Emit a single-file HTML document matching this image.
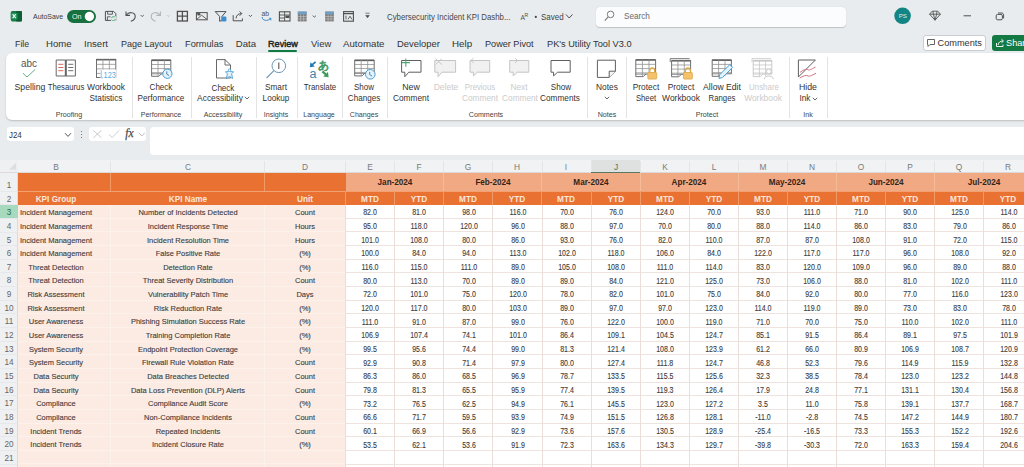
<!DOCTYPE html><html><head><meta charset="utf-8"><style>
html,body{margin:0;padding:0;}body{width:1024px;height:467px;overflow:hidden;background:#E9ECEE;font-family:"Liberation Sans", sans-serif;position:relative;}
.a{position:absolute;}.t{position:absolute;white-space:nowrap;}
</style></head><body>
<div class="a" style="left:596.00px;top:6.50px;width:249.50px;height:20.00px;background:#FBFCFD;border-radius:4px;box-shadow:0 0.6px 1px rgba(0,0,0,0.18);"></div>
<svg class="a" style="left:0;top:0" width="1024" height="30" viewBox="0 0 1024 30"><rect x="10.8" y="10.9" width="11.2" height="10.5" rx="1.6" fill="#1A7A45"/><rect x="16" y="10.9" width="6" height="10.5" rx="1" fill="#0E5F33"/><rect x="10.8" y="13" width="6.8" height="6.4" rx="0.6" fill="#21915A"/><path d="M12.6 14.2 L15.8 18.2 M15.8 14.2 L12.6 18.2" stroke="#E8F6EE" stroke-width="1.2"/><rect x="67" y="10" width="29" height="13" rx="6.5" fill="#17703F"/><circle cx="89.4" cy="16.5" r="4.7" fill="#fff"/><path d="M105.4 11.4 H113.6 L115.8 13.6 V20.4 H105.4 Z" fill="none" stroke="#505050" stroke-width="1"/><path d="M107.6 11.4 V14.2 H112.4 V11.4 M107.4 20.4 V16.8 H110.6" fill="none" stroke="#505050" stroke-width="0.9"/><circle cx="113.4" cy="18.6" r="3" fill="#E9ECEE"/><path d="M111.4 18.2 A2.1 2.1 0 0 1 115.2 17.6 M115.4 19 A2.1 2.1 0 0 1 111.6 19.6" fill="none" stroke="#3FA86A" stroke-width="0.9"/><path d="M126 11.4 V15.4 H130" fill="none" stroke="#505050" stroke-width="1.1"/><path d="M126.4 15 C128.6 11.6 135.2 11.8 135.2 16.2 C135.2 18.8 133 20.6 130.8 21.2" fill="none" stroke="#505050" stroke-width="1.1"/><path d="M140.6 15 L142.2 16.6 L143.8 15" fill="none" stroke="#505050" stroke-width="0.9"/><path d="M160.4 11.4 V15.4 H156.4" fill="none" stroke="#b4b4b4" stroke-width="1.1"/><path d="M160 15 C157.8 11.6 151.2 11.8 151.2 16.2 C151.2 18.8 153.4 20.6 155.6 21.2" fill="none" stroke="#b4b4b4" stroke-width="1.1"/><path d="M166.6 15 L168.2 16.6 L169.8 15" fill="none" stroke="#c4c4c4" stroke-width="0.9"/><rect x="177.4" y="11.4" width="10" height="9.6" fill="none" stroke="#505050" stroke-width="1.3"/><path d="M182.4 11.4 V21 M177.4 16.2 H187.4" stroke="#505050" stroke-width="1.3"/><rect x="196.4" y="12.6" width="10.8" height="7.2" fill="none" stroke="#505050" stroke-width="1"/><path d="M196.8 19.4 L201.6 15.2 L207 19.4 M196.6 13.6 L200 13.6" fill="none" stroke="#505050" stroke-width="0.9"/><rect x="197.4" y="13.4" width="3" height="2" fill="#505050"/><path d="M215.2 11.6 H226 L222 16.4 V20.6 L219.6 21.2 V16.4 Z" fill="none" stroke="#505050" stroke-width="1" stroke-linejoin="round"/><rect x="221.6" y="16.6" width="4.8" height="4.8" rx="1.2" fill="#3D8FD1"/><path d="M233.2 15.2 V20.8 H242.4 V18.4" fill="none" stroke="#505050" stroke-width="1"/><path d="M236 18.4 C236.4 15 238.4 13.6 241.6 13.6 M239.6 11.4 L241.8 13.6 L239.6 15.8" fill="none" stroke="#505050" stroke-width="1"/><path d="M248.8 15 L250.4 16.6 L252 15" fill="none" stroke="#505050" stroke-width="0.9"/><text x="261.4" y="16.2" font-family="Liberation Sans" font-size="6.8" fill="#505050">ab</text><path d="M262.2 17 C262 20.6 267.4 21.6 270.8 18.6 M269 18.2 L271 18.4 L270.8 20.4" fill="none" stroke="#3D8FD1" stroke-width="1"/><rect x="279.4" y="11.8" width="10.6" height="9.2" fill="none" stroke="#505050" stroke-width="1.1"/><path d="M284.6 11.8 V21 M279.4 15 H290 M279.4 18 H284.6" stroke="#505050" stroke-width="0.9"/><rect x="285.4" y="15.6" width="4" height="2.4" fill="#505050"/><rect x="297.8" y="11.6" width="8.8" height="9.8" fill="#7a7a7a"/><rect x="297.8" y="11.6" width="8.8" height="2.8" fill="#6F9FC6"/><path d="M297.8 16.6 H306.6 M297.8 19 H306.6 M300.7 14.4 V21.4 M303.7 14.4 V21.4" stroke="#cfcfcf" stroke-width="0.6"/><path d="M312.8 15.6 L314.4 17.2 L316 15.6" fill="none" stroke="#505050" stroke-width="0.9"/><rect x="325.2" y="11.6" width="8.6" height="9.8" fill="#7a7a7a"/><rect x="325.2" y="11.6" width="8.6" height="2.8" fill="#6F9FC6"/><path d="M325.2 16.6 H333.8 M325.2 19 H333.8 M328.1 14.4 V21.4 M331 14.4 V21.4" stroke="#cfcfcf" stroke-width="0.6"/><rect x="343.6" y="11.6" width="9.8" height="9.6" fill="none" stroke="#505050" stroke-width="1.1"/><path d="M343.6 13.6 H353.4" stroke="#505050" stroke-width="1.3"/><path d="M346 15.6 V19.4 M348 19.4 L350 16.2 L352 19.4" fill="none" stroke="#505050" stroke-width="0.9"/><path d="M365.4 13.2 H369.6 M365.8 15.4 L367.5 17.8 L369.2 15.4 Z" fill="#505050" stroke="#505050" stroke-width="0.7"/><text x="520.4" y="20" font-family="Liberation Sans" font-size="6.6" fill="#505050">A</text><text x="524.4" y="16.6" font-family="Liberation Sans" font-size="5.2" fill="#505050">R</text><circle cx="535.8" cy="16.9" r="1.1" fill="#444"/><path d="M565.9 14.4 L569.2 18 L572.5 14.4" fill="none" stroke="#505050" stroke-width="1"/><circle cx="610.6" cy="14.4" r="3.3" fill="none" stroke="#7a7a7a" stroke-width="1"/><path d="M608.2 16.8 L604.8 20.6" stroke="#7a7a7a" stroke-width="1.1"/><circle cx="902.6" cy="15.8" r="8.3" fill="#138585"/><path d="M932.2 11.2 H937.8 L940.4 14.2 L935 20.2 L929.6 14.2 Z M929.6 14.2 H940.4 M933.4 14.2 L935 20.2 L936.6 14.2 M933 11.4 L933.4 14.2 M937 11.4 L936.6 14.2" fill="none" stroke="#505050" stroke-width="0.9" stroke-linejoin="round"/><path d="M963.6 15.8 H971" stroke="#505050" stroke-width="1"/><rect x="996.2" y="14.4" width="6.2" height="5.4" rx="1.4" fill="none" stroke="#505050" stroke-width="1"/><path d="M998 13 H1001.8 C1002.8 13 1003.6 13.8 1003.6 14.8 V18.4" fill="none" stroke="#505050" stroke-width="1"/></svg>
<div class="t" style="top:13.31px;font-size:7.2px;line-height:7.2px;color:#3a3a3a;left:33.40px;transform:scaleX(0.97);transform-origin:0 50%;">AutoSave</div>
<div class="t" style="top:13.07px;font-size:7.6px;line-height:7.6px;color:#E8F5EC;left:71.60px;transform:scaleX(0.95);transform-origin:0 50%;">On</div>
<div class="t" style="top:12.84px;font-size:8.7px;line-height:8.7px;color:#474747;left:386.50px;transform:scaleX(0.9);transform-origin:0 50%;">Cybersecurity Incident KPI Dashb...</div>
<div class="t" style="top:12.92px;font-size:8.6px;line-height:8.6px;color:#444;left:540.90px;transform:scaleX(0.93);transform-origin:0 50%;">Saved</div>
<div class="t" style="top:12.15px;font-size:8.8px;line-height:8.8px;color:#6a6a6a;left:624.00px;transform:scaleX(0.93);transform-origin:0 50%;">Search</div>
<div class="t" style="top:12.95px;font-size:6.2px;line-height:6.2px;color:#D8F0F0;left:752.80px;width:300px;text-align:center;">PS</div>
<div class="t" style="top:38.67px;font-size:9.6px;line-height:9.6px;color:#333;left:14.50px;transform:scaleX(0.92);transform-origin:0 50%;">File</div>
<div class="t" style="top:38.67px;font-size:9.6px;line-height:9.6px;color:#333;left:46.00px;transform:scaleX(1.0);transform-origin:0 50%;">Home</div>
<div class="t" style="top:38.67px;font-size:9.6px;line-height:9.6px;color:#333;left:84.00px;transform:scaleX(1.0);transform-origin:0 50%;">Insert</div>
<div class="t" style="top:38.67px;font-size:9.6px;line-height:9.6px;color:#333;left:121.00px;transform:scaleX(0.94);transform-origin:0 50%;">Page Layout</div>
<div class="t" style="top:38.67px;font-size:9.6px;line-height:9.6px;color:#333;left:185.00px;transform:scaleX(0.96);transform-origin:0 50%;">Formulas</div>
<div class="t" style="top:38.67px;font-size:9.6px;line-height:9.6px;color:#333;left:235.75px;transform:scaleX(1.0);transform-origin:0 50%;">Data</div>
<div class="t" style="top:38.67px;font-size:9.6px;line-height:9.6px;color:#222;left:268.00px;transform:scaleX(0.95);transform-origin:0 50%;-webkit-text-stroke:0.45px #222;">Review</div>
<div class="t" style="top:38.67px;font-size:9.6px;line-height:9.6px;color:#333;left:310.50px;transform:scaleX(0.98);transform-origin:0 50%;">View</div>
<div class="t" style="top:38.67px;font-size:9.6px;line-height:9.6px;color:#333;left:343.00px;transform:scaleX(1.01);transform-origin:0 50%;">Automate</div>
<div class="t" style="top:38.67px;font-size:9.6px;line-height:9.6px;color:#333;left:397.00px;transform:scaleX(0.98);transform-origin:0 50%;">Developer</div>
<div class="t" style="top:38.67px;font-size:9.6px;line-height:9.6px;color:#333;left:452.00px;transform:scaleX(1.02);transform-origin:0 50%;">Help</div>
<div class="t" style="top:38.67px;font-size:9.6px;line-height:9.6px;color:#333;left:485.00px;transform:scaleX(0.95);transform-origin:0 50%;">Power Pivot</div>
<div class="t" style="top:38.67px;font-size:9.6px;line-height:9.6px;color:#333;left:547.00px;transform:scaleX(0.96);transform-origin:0 50%;">PK's Utility Tool V3.0</div>
<div class="a" style="left:268.00px;top:49.80px;width:29.00px;height:1.80px;background:#107C41;border-radius:1px;"></div>
<div class="a" style="left:923.00px;top:35.00px;width:63.00px;height:16.30px;background:#FFFFFF;border:1px solid #C9CCD0;border-radius:3px;box-sizing:border-box;"></div>
<svg class="a" style="left:925.8px;top:38.4px;" width="10" height="10" viewBox="0 0 10 10"><path d="M1.5 1.5 H8.5 V6.5 H4 L2 8.5 V6.5 H1.5 Z" fill="none" stroke="#555" stroke-width="0.9"/></svg>
<div class="t" style="top:38.70px;font-size:9.2px;line-height:9.2px;color:#333;left:937.50px;">Comments</div>
<div class="a" style="left:992.00px;top:35.00px;width:38.00px;height:16.30px;background:#137A43;border-radius:3px;"></div>
<svg class="a" style="left:995px;top:38px;" width="10" height="10" viewBox="0 0 10 10"><path d="M1.5 5 V8.5 H8 V6.5" fill="none" stroke="#fff" stroke-width="0.9"/><path d="M3 7 C3.5 4 5.5 3 8 3 M6.5 1.2 L8.5 3 L6.5 4.8" fill="none" stroke="#fff" stroke-width="0.9"/></svg>
<div class="t" style="top:38.70px;font-size:9.2px;line-height:9.2px;color:#fff;left:1006.00px;">Share</div>
<div class="a" style="left:5.70px;top:53.00px;width:1034.30px;height:66.70px;background:#FFFFFF;border-radius:6px;box-shadow:0 1px 2px rgba(0,0,0,0.2);"></div>
<div class="a" style="left:131.50px;top:57.00px;width:0.80px;height:61.00px;background:#E3E3E3;"></div>
<div class="a" style="left:190.50px;top:57.00px;width:0.80px;height:61.00px;background:#E3E3E3;"></div>
<div class="a" style="left:256.20px;top:57.00px;width:0.80px;height:61.00px;background:#E3E3E3;"></div>
<div class="a" style="left:296.50px;top:57.00px;width:0.80px;height:61.00px;background:#E3E3E3;"></div>
<div class="a" style="left:342.00px;top:57.00px;width:0.80px;height:61.00px;background:#E3E3E3;"></div>
<div class="a" style="left:386.50px;top:57.00px;width:0.80px;height:61.00px;background:#E3E3E3;"></div>
<div class="a" style="left:586.50px;top:57.00px;width:0.80px;height:61.00px;background:#E3E3E3;"></div>
<div class="a" style="left:625.60px;top:57.00px;width:0.80px;height:61.00px;background:#E3E3E3;"></div>
<div class="a" style="left:788.80px;top:57.00px;width:0.80px;height:61.00px;background:#E3E3E3;"></div>
<div class="a" style="left:827.30px;top:57.00px;width:0.80px;height:61.00px;background:#E3E3E3;"></div>
<div class="t" style="top:82.98px;font-size:9.0px;line-height:9.0px;color:#333;left:-120.50px;width:300px;text-align:center;transform:scaleX(0.962);transform-origin:50% 50%;">Spelling</div>
<div class="t" style="top:82.98px;font-size:9.0px;line-height:9.0px;color:#333;left:-84.12px;width:300px;text-align:center;transform:scaleX(0.859);transform-origin:50% 50%;">Thesaurus</div>
<div class="t" style="top:82.98px;font-size:9.0px;line-height:9.0px;color:#333;left:-44.00px;width:300px;text-align:center;transform:scaleX(0.937);transform-origin:50% 50%;">Workbook</div>
<div class="t" style="top:94.08px;font-size:9.0px;line-height:9.0px;color:#333;left:-44.00px;width:300px;text-align:center;transform:scaleX(0.911);transform-origin:50% 50%;">Statistics</div>
<div class="t" style="top:82.98px;font-size:9.0px;line-height:9.0px;color:#333;left:11.00px;width:300px;text-align:center;transform:scaleX(0.894);transform-origin:50% 50%;">Check</div>
<div class="t" style="top:94.08px;font-size:9.0px;line-height:9.0px;color:#333;left:11.00px;width:300px;text-align:center;transform:scaleX(0.908);transform-origin:50% 50%;">Performance</div>
<div class="t" style="top:82.98px;font-size:9.0px;line-height:9.0px;color:#333;left:126.15px;width:300px;text-align:center;transform:scaleX(0.912);transform-origin:50% 50%;">Smart</div>
<div class="t" style="top:94.08px;font-size:9.0px;line-height:9.0px;color:#333;left:126.00px;width:300px;text-align:center;transform:scaleX(0.908);transform-origin:50% 50%;">Lookup</div>
<div class="t" style="top:82.98px;font-size:9.0px;line-height:9.0px;color:#333;left:169.60px;width:300px;text-align:center;transform:scaleX(0.871);transform-origin:50% 50%;">Translate</div>
<div class="t" style="top:82.98px;font-size:9.0px;line-height:9.0px;color:#333;left:214.40px;width:300px;text-align:center;transform:scaleX(0.888);transform-origin:50% 50%;">Show</div>
<div class="t" style="top:94.08px;font-size:9.0px;line-height:9.0px;color:#333;left:214.40px;width:300px;text-align:center;transform:scaleX(0.899);transform-origin:50% 50%;">Changes</div>
<div class="t" style="top:82.98px;font-size:9.0px;line-height:9.0px;color:#333;left:261.40px;width:300px;text-align:center;transform:scaleX(0.977);transform-origin:50% 50%;">New</div>
<div class="t" style="top:94.08px;font-size:9.0px;line-height:9.0px;color:#333;left:261.00px;width:300px;text-align:center;transform:scaleX(0.923);transform-origin:50% 50%;">Comment</div>
<div class="t" style="top:82.98px;font-size:9.0px;line-height:9.0px;color:#cbcbcb;left:295.70px;width:300px;text-align:center;transform:scaleX(0.946);transform-origin:50% 50%;">Delete</div>
<div class="t" style="top:82.98px;font-size:9.0px;line-height:9.0px;color:#cbcbcb;left:330.15px;width:300px;text-align:center;transform:scaleX(0.865);transform-origin:50% 50%;">Previous</div>
<div class="t" style="top:94.08px;font-size:9.0px;line-height:9.0px;color:#cbcbcb;left:329.90px;width:300px;text-align:center;transform:scaleX(0.923);transform-origin:50% 50%;">Comment</div>
<div class="t" style="top:82.98px;font-size:9.0px;line-height:9.0px;color:#cbcbcb;left:369.20px;width:300px;text-align:center;transform:scaleX(0.929);transform-origin:50% 50%;">Next</div>
<div class="t" style="top:94.08px;font-size:9.0px;line-height:9.0px;color:#cbcbcb;left:369.50px;width:300px;text-align:center;transform:scaleX(0.918);transform-origin:50% 50%;">Comment</div>
<div class="t" style="top:82.98px;font-size:9.0px;line-height:9.0px;color:#333;left:410.60px;width:300px;text-align:center;transform:scaleX(0.906);transform-origin:50% 50%;">Show</div>
<div class="t" style="top:94.08px;font-size:9.0px;line-height:9.0px;color:#333;left:410.10px;width:300px;text-align:center;transform:scaleX(0.915);transform-origin:50% 50%;">Comments</div>
<div class="t" style="top:82.98px;font-size:9.0px;line-height:9.0px;color:#333;left:456.50px;width:300px;text-align:center;transform:scaleX(0.927);transform-origin:50% 50%;">Notes</div>
<div class="t" style="top:82.98px;font-size:9.0px;line-height:9.0px;color:#333;left:495.85px;width:300px;text-align:center;transform:scaleX(0.929);transform-origin:50% 50%;">Protect</div>
<div class="t" style="top:94.08px;font-size:9.0px;line-height:9.0px;color:#333;left:495.70px;width:300px;text-align:center;transform:scaleX(0.858);transform-origin:50% 50%;">Sheet</div>
<div class="t" style="top:82.98px;font-size:9.0px;line-height:9.0px;color:#333;left:531.15px;width:300px;text-align:center;transform:scaleX(0.929);transform-origin:50% 50%;">Protect</div>
<div class="t" style="top:94.08px;font-size:9.0px;line-height:9.0px;color:#333;left:531.00px;width:300px;text-align:center;transform:scaleX(0.937);transform-origin:50% 50%;">Workbook</div>
<div class="t" style="top:82.98px;font-size:9.0px;line-height:9.0px;color:#333;left:571.80px;width:300px;text-align:center;transform:scaleX(0.957);transform-origin:50% 50%;">Allow Edit</div>
<div class="t" style="top:94.08px;font-size:9.0px;line-height:9.0px;color:#333;left:572.00px;width:300px;text-align:center;transform:scaleX(0.864);transform-origin:50% 50%;">Ranges</div>
<div class="t" style="top:82.98px;font-size:9.0px;line-height:9.0px;color:#cbcbcb;left:613.50px;width:300px;text-align:center;transform:scaleX(0.876);transform-origin:50% 50%;">Unshare</div>
<div class="t" style="top:94.08px;font-size:9.0px;line-height:9.0px;color:#cbcbcb;left:613.05px;width:300px;text-align:center;transform:scaleX(0.934);transform-origin:50% 50%;">Workbook</div>
<div class="t" style="top:83.98px;font-size:9.0px;line-height:9.0px;color:#333;left:73.00px;width:300px;text-align:center;transform:scaleX(0.894);transform-origin:50% 50%;">Check</div>
<div class="t" style="top:94.28px;font-size:9.0px;line-height:9.0px;color:#333;left:69.50px;width:300px;text-align:center;transform:scaleX(0.934);transform-origin:50% 50%;">Accessibility</div>
<div class="t" style="top:83.28px;font-size:9.0px;line-height:9.0px;color:#333;left:658.00px;width:300px;text-align:center;transform:scaleX(0.972);transform-origin:50% 50%;">Hide</div>
<div class="t" style="top:94.08px;font-size:9.0px;line-height:9.0px;color:#333;left:654.60px;width:300px;text-align:center;transform:scaleX(0.92);transform-origin:50% 50%;">Ink</div>
<svg class="a" style="left:243.8px;top:95.6px;" width="6" height="4" viewBox="0 0 6 4"><path d="M0.8 0.8 L3 3 L5.2 0.8" fill="none" stroke="#555" stroke-width="0.9"/></svg>
<svg class="a" style="left:603.5px;top:95.5px;" width="6" height="4" viewBox="0 0 6 4"><path d="M0.8 0.8 L3 3 L5.2 0.8" fill="none" stroke="#555" stroke-width="0.9"/></svg>
<svg class="a" style="left:811.5px;top:96.5px;" width="6" height="4" viewBox="0 0 6 4"><path d="M0.8 0.8 L3 3 L5.2 0.8" fill="none" stroke="#555" stroke-width="0.9"/></svg>
<div class="t" style="top:111.31px;font-size:7.9px;line-height:7.9px;color:#444;left:-80.75px;width:300px;text-align:center;transform:scaleX(0.9);transform-origin:50% 50%;">Proofing</div>
<div class="t" style="top:111.31px;font-size:7.9px;line-height:7.9px;color:#444;left:10.60px;width:300px;text-align:center;transform:scaleX(0.9);transform-origin:50% 50%;">Performance</div>
<div class="t" style="top:111.31px;font-size:7.9px;line-height:7.9px;color:#444;left:73.25px;width:300px;text-align:center;transform:scaleX(0.9);transform-origin:50% 50%;">Accessibility</div>
<div class="t" style="top:111.31px;font-size:7.9px;line-height:7.9px;color:#444;left:125.70px;width:300px;text-align:center;transform:scaleX(0.9);transform-origin:50% 50%;">Insights</div>
<div class="t" style="top:111.31px;font-size:7.9px;line-height:7.9px;color:#444;left:169.40px;width:300px;text-align:center;transform:scaleX(0.9);transform-origin:50% 50%;">Language</div>
<div class="t" style="top:111.31px;font-size:7.9px;line-height:7.9px;color:#444;left:214.25px;width:300px;text-align:center;transform:scaleX(0.9);transform-origin:50% 50%;">Changes</div>
<div class="t" style="top:111.31px;font-size:7.9px;line-height:7.9px;color:#444;left:336.00px;width:300px;text-align:center;transform:scaleX(0.9);transform-origin:50% 50%;">Comments</div>
<div class="t" style="top:111.31px;font-size:7.9px;line-height:7.9px;color:#444;left:456.50px;width:300px;text-align:center;transform:scaleX(0.9);transform-origin:50% 50%;">Notes</div>
<div class="t" style="top:111.31px;font-size:7.9px;line-height:7.9px;color:#444;left:557.00px;width:300px;text-align:center;transform:scaleX(0.9);transform-origin:50% 50%;">Protect</div>
<div class="t" style="top:111.31px;font-size:7.9px;line-height:7.9px;color:#444;left:657.50px;width:300px;text-align:center;transform:scaleX(0.9);transform-origin:50% 50%;">Ink</div>
<svg class="a" style="left:0;top:0" width="1024" height="125" viewBox="0 0 1024 125"><text x="21" y="67.4" font-family="Liberation Sans" font-size="10" fill="#555" textLength="16" lengthAdjust="spacingAndGlyphs">abc</text><path d="M23 73.2 L27 77 L35.2 69.4" fill="none" stroke="#62B285" stroke-width="1"/><path d="M56.2 60 H65.6 V76 H56.2 Z M66 76 V60 H75.4 V76 H66" fill="#fff" stroke="#5f5f5f" stroke-width="0.95"/><path d="M65.2 60.2 V76.3 M66.4 60.2 V76.3" stroke="#5f5f5f" stroke-width="0.6"/><path d="M58.3 64.3 H63.4 M58.3 67.5 H63.4 M58.3 70.7 H63.4" stroke="#D2574A" stroke-width="0.9"/><path d="M68.2 64.3 H73.3 M68.2 67.5 H73.3 M68.2 70.7 H73.3" stroke="#5f5f5f" stroke-width="0.9"/><rect x="96.5" y="59.3" width="19.299999999999997" height="18.200000000000003" fill="#fff" stroke="#5f5f5f" stroke-width="0.9"/><path d="M96.5 59.8 H115.8" stroke="#5f5f5f" stroke-width="1.3"/><path d="M102.93 59.3 V77.5" stroke="#8c8c8c" stroke-width="0.765"/><path d="M109.37 59.3 V77.5" stroke="#8c8c8c" stroke-width="0.765"/><path d="M96.5 64.35 H115.8" stroke="#8c8c8c" stroke-width="0.765"/><path d="M96.5 68.90 H115.8" stroke="#8c8c8c" stroke-width="0.765"/><path d="M96.5 73.45 H115.8" stroke="#8c8c8c" stroke-width="0.765"/><rect x="100.5" y="69.6" width="15.8" height="8.6" fill="#fff"/><path d="M101.2 70.2 V77.8 H103" fill="none" stroke="#7DBCE4" stroke-width="0.9"/><text x="103.6" y="77.6" font-family="Liberation Sans" font-size="8.6" fill="#5AAEE0" textLength="12.4" lengthAdjust="spacingAndGlyphs">123</text><path d="M151.6 59.9 H170.8 V73.8 M151.6 59.9 V76.3 H158.89600000000002 L161.39600000000002 73.8 H170.8" fill="#fff" stroke="#5f5f5f" stroke-width="0.9"/><path d="M151.6 73.8 H161.39600000000002" stroke="#5f5f5f" stroke-width="0.7200000000000001"/><path d="M151.6 60.4 H170.8" stroke="#5f5f5f" stroke-width="1.3"/><path d="M158.00 59.9 V76.3" stroke="#8c8c8c" stroke-width="0.765"/><path d="M164.40 59.9 V76.3" stroke="#8c8c8c" stroke-width="0.765"/><path d="M151.6 64.50 H170.8" stroke="#8c8c8c" stroke-width="0.765"/><path d="M151.6 68.60 H170.8" stroke="#8c8c8c" stroke-width="0.765"/><path d="M151.6 72.70 H170.8" stroke="#8c8c8c" stroke-width="0.765"/><circle cx="167.4" cy="73.8" r="4.6" fill="#E3F2FB" stroke="#4A9FD4" stroke-width="1"/><path d="M166.8 71.39999999999999 V74.2 L169.20000000000002 75.6" fill="none" stroke="#3F7FA8" stroke-width="0.9"/><path d="M216.5 59.6 H225 L230.5 65 V78 H216.5 Z" fill="#fff" stroke="#5f5f5f" stroke-width="0.95"/><path d="M225 59.6 V65 H230.5" fill="none" stroke="#5f5f5f" stroke-width="0.9"/><path d="M229.5 69 L230.7 71.6 L233.6 71.8 L231.6 73.8 L232.6 78.6 L229.5 76.4 L226.4 78.6 L227.4 73.8 L225.4 71.8 L228.3 71.6 Z" fill="#E3F2FB" stroke="#4A9FD4" stroke-width="0.9" stroke-linejoin="round"/><circle cx="229.5" cy="70.2" r="1.3" fill="#fff" stroke="#4A9FD4" stroke-width="0.8"/><circle cx="278.8" cy="65.8" r="6.8" fill="#fff" stroke="#6E97B3" stroke-width="1"/><path d="M273.9 70.7 L266.6 78" stroke="#6E97B3" stroke-width="1.1"/><path d="M278.8 62.6 V69" stroke="#555" stroke-width="1.1"/><text x="318.4" y="68.6" font-family="Liberation Sans" font-size="11" fill="#3F9A5E" stroke="#3F9A5E" stroke-width="0.6">あ</text><text x="309.6" y="77.8" font-family="Liberation Sans" font-size="12" fill="#3A87AE" textLength="7" lengthAdjust="spacingAndGlyphs">a</text><path d="M316.2 62.4 L313.2 65 L314.8 66.6 L309.8 67.2 L310.4 62.2 L312 63.8 L315 61.2 Z" fill="#1F7CB8"/><path d="M321.6 72.2 L324.8 75 L323.2 76.6 L328.6 77.2 L328 71.8 L326.4 73.4 L323.2 70.6 Z" fill="#3F9A5E"/><path d="M354.7 60 H374.2 V73.4 M354.7 60 V75.9 H362.11 L364.61 73.4 H374.2" fill="#fff" stroke="#5f5f5f" stroke-width="0.9"/><path d="M354.7 73.4 H364.61" stroke="#5f5f5f" stroke-width="0.7200000000000001"/><path d="M354.7 60.5 H374.2" stroke="#5f5f5f" stroke-width="1.3"/><path d="M361.20 60 V75.9" stroke="#8c8c8c" stroke-width="0.765"/><path d="M367.70 60 V75.9" stroke="#8c8c8c" stroke-width="0.765"/><path d="M354.7 64.47 H374.2" stroke="#8c8c8c" stroke-width="0.765"/><path d="M354.7 68.45 H374.2" stroke="#8c8c8c" stroke-width="0.765"/><path d="M354.7 72.43 H374.2" stroke="#8c8c8c" stroke-width="0.765"/><circle cx="370.3" cy="74.3" r="4.8" fill="#E3F2FB" stroke="#4A9FD4" stroke-width="1"/><path d="M369.7 71.89999999999999 V74.7 L372.1 76.1" fill="none" stroke="#3F7FA8" stroke-width="0.9"/><path d="M401.6 60.5 H421 V72.2 H408.8 L404.8 76.7 V72.2 H401.6 Z" fill="#fff" stroke="#5f5f5f" stroke-width="1" stroke-linejoin="round"/><path d="M405.8 58.6 V66.8 M401.8 62.6 H410" stroke="#4FA876" stroke-width="1.1"/><path d="M434.8 60.5 H455.6 V72.2 H442 L438 76.7 V72.2 H434.8 Z" fill="#f1f1f1" stroke="#c4c4c4" stroke-width="1" stroke-linejoin="round"/><path d="M435.5 58.6 L442 64.6 M442 58.6 L435.5 64.6" stroke="#c4c4c4" stroke-width="0.9"/><path d="M470 60.5 H489.7 V72.2 H477.4 L473.4 75.9 V72.2 H470 Z" fill="#f1f1f1" stroke="#c4c4c4" stroke-width="1" stroke-linejoin="round"/><path d="M477.5 60.5 H471 M473.6 58 L471 60.5 L473.6 63" fill="none" stroke="#c4c4c4" stroke-width="0.9"/><path d="M509.7 60.5 H528.8 V72.2 H517.2 L513.2 75.9 V72.2 H509.7 Z" fill="#f1f1f1" stroke="#c4c4c4" stroke-width="1" stroke-linejoin="round"/><path d="M511 60.5 H517.5 M514.9 58 L517.5 60.5 L514.9 63" fill="none" stroke="#c4c4c4" stroke-width="0.9"/><path d="M551 60.5 H570.2 V72.2 H557.6 L553.6 75.9 V72.2 H551 Z" fill="#fff" stroke="#5f5f5f" stroke-width="1" stroke-linejoin="round"/><path d="M597.4 60.2 H615.4 V71.2 L609.2 77.4 H597.4 Z" fill="#fff" stroke="#5f5f5f" stroke-width="1"/><path d="M615.4 71.2 H609.2 V77.4" fill="#f4f4f4" stroke="#5f5f5f" stroke-width="1"/><path d="M635.8 59.6 H655.6 V74.1 M635.8 59.6 V76.6 H643.324 L645.824 74.1 H655.6" fill="#fff" stroke="#5f5f5f" stroke-width="0.9"/><path d="M635.8 74.1 H645.824" stroke="#5f5f5f" stroke-width="0.7200000000000001"/><path d="M635.8 60.1 H655.6" stroke="#5f5f5f" stroke-width="1.3"/><path d="M642.40 59.6 V76.6" stroke="#8c8c8c" stroke-width="0.765"/><path d="M649.00 59.6 V76.6" stroke="#8c8c8c" stroke-width="0.765"/><path d="M635.8 64.35 H655.6" stroke="#8c8c8c" stroke-width="0.765"/><path d="M635.8 68.60 H655.6" stroke="#8c8c8c" stroke-width="0.765"/><path d="M635.8 72.85 H655.6" stroke="#8c8c8c" stroke-width="0.765"/><path d="M649.7579999999999 73 V71 C649.7579999999999 67 654.7420000000001 67 654.7420000000001 71 V73" fill="none" stroke="#E0A94A" stroke-width="1.3"/><rect x="647.8" y="72.5" width="8.900000000000091" height="6.599999999999994" rx="0.8" fill="#F4C26B" stroke="#E0A94A" stroke-width="0.8"/><path d="M670.2 62.2 V58.6 H689.6" fill="none" stroke="#5f5f5f" stroke-width="0.8"/><path d="M671.6 60.4 H690.6 V74.3 M671.6 60.4 V76.8 H678.82 L681.32 74.3 H690.6" fill="#fff" stroke="#5f5f5f" stroke-width="0.9"/><path d="M671.6 74.3 H681.32" stroke="#5f5f5f" stroke-width="0.7200000000000001"/><path d="M671.6 60.9 H690.6" stroke="#5f5f5f" stroke-width="1.3"/><path d="M677.93 60.4 V76.8" stroke="#8c8c8c" stroke-width="0.765"/><path d="M684.27 60.4 V76.8" stroke="#8c8c8c" stroke-width="0.765"/><path d="M671.6 65.00 H690.6" stroke="#8c8c8c" stroke-width="0.765"/><path d="M671.6 69.10 H690.6" stroke="#8c8c8c" stroke-width="0.765"/><path d="M671.6 73.20 H690.6" stroke="#8c8c8c" stroke-width="0.765"/><path d="M685.38 73 V71 C685.38 67 690.42 67 690.42 71 V73" fill="none" stroke="#E0A94A" stroke-width="1.3"/><rect x="683.4" y="72.5" width="9.0" height="6.599999999999994" rx="0.8" fill="#F4C26B" stroke="#E0A94A" stroke-width="0.8"/><path d="M712.2 59.8 H731.4 V73.8 M712.2 59.8 V76.3 H719.496 L721.996 73.8 H731.4" fill="#fff" stroke="#5f5f5f" stroke-width="0.9"/><path d="M712.2 73.8 H721.996" stroke="#5f5f5f" stroke-width="0.7200000000000001"/><path d="M712.2 60.3 H731.4" stroke="#5f5f5f" stroke-width="1.3"/><path d="M718.60 59.8 V76.3" stroke="#8c8c8c" stroke-width="0.765"/><path d="M725.00 59.8 V76.3" stroke="#8c8c8c" stroke-width="0.765"/><path d="M712.2 64.42 H731.4" stroke="#8c8c8c" stroke-width="0.765"/><path d="M712.2 68.55 H731.4" stroke="#8c8c8c" stroke-width="0.765"/><path d="M712.2 72.67 H731.4" stroke="#8c8c8c" stroke-width="0.765"/><path d="M719 78.4 L719.6 74.8 L729.8 64.6 L732.6 67.4 L722.4 77.6 Z" fill="#E3F2FB" stroke="#4A9FD4" stroke-width="1" stroke-linejoin="round"/><path d="M752 62.2 V58.6 H771" fill="none" stroke="#c4c4c4" stroke-width="0.8"/><path d="M753.2 60.4 H771.8 V74.1 M753.2 60.4 V76.6 H760.268 L762.768 74.1 H771.8" fill="#fff" stroke="#c4c4c4" stroke-width="0.9"/><path d="M753.2 74.1 H762.768" stroke="#c4c4c4" stroke-width="0.7200000000000001"/><path d="M753.2 60.9 H771.8" stroke="#c4c4c4" stroke-width="1.3"/><path d="M759.40 60.4 V76.6" stroke="#c4c4c4" stroke-width="0.765"/><path d="M765.60 60.4 V76.6" stroke="#c4c4c4" stroke-width="0.765"/><path d="M753.2 64.95 H771.8" stroke="#c4c4c4" stroke-width="0.765"/><path d="M753.2 69.00 H771.8" stroke="#c4c4c4" stroke-width="0.765"/><path d="M753.2 73.05 H771.8" stroke="#c4c4c4" stroke-width="0.765"/><circle cx="768.8" cy="71.4" r="2.4" fill="#fff" stroke="#c4c4c4" stroke-width="0.9"/><path d="M764.2 79.2 C764.6 75 773 75 773.4 79.2" fill="#fff" stroke="#c4c4c4" stroke-width="0.9"/><path d="M798.4 60 H815.4 L798.4 77 Z" fill="#fff" stroke="#5f5f5f" stroke-width="1"/><path d="M800 72.4 C803 70 806 68.6 807.6 69.6 C809 70.6 810.6 69.8 815.6 67" fill="none" stroke="#D46A7E" stroke-width="0.95"/><path d="M799.6 78.2 C803 76 806 74.8 808 75.8 C809.6 76.6 811 75.8 816 73.2" fill="none" stroke="#D46A7E" stroke-width="0.95"/></svg>
<div class="a" style="left:6.80px;top:127.40px;width:67.00px;height:13.80px;background:#FFFFFF;border-radius:3px;"></div>
<div class="t" style="top:130.52px;font-size:8.6px;line-height:8.6px;color:#333;left:9.40px;transform:scaleX(0.92);transform-origin:0 50%;">J24</div>
<svg class="a" style="left:63.5px;top:131.5px;" width="8" height="6" viewBox="0 0 8 6"><path d="M1 1.2 L4 4.4 L7 1.2" fill="none" stroke="#555" stroke-width="1"/></svg>
<div class="a" style="left:80.8px;top:130.79999999999998px;width:1.6px;height:1.6px;border-radius:50%;background:#555;"></div>
<div class="a" style="left:80.8px;top:133.79999999999998px;width:1.6px;height:1.6px;border-radius:50%;background:#555;"></div>
<div class="a" style="left:80.8px;top:136.79999999999998px;width:1.6px;height:1.6px;border-radius:50%;background:#555;"></div>
<div class="a" style="left:88.90px;top:127.40px;width:57.10px;height:13.80px;background:#FFFFFF;border-radius:3px;"></div>
<svg class="a" style="left:92px;top:129px;" width="11" height="10" viewBox="0 0 11 10"><path d="M1.4 1.4 L9.4 8.8 M9.4 1.4 L1.4 8.8" stroke="#c2c2c2" stroke-width="0.9"/></svg>
<svg class="a" style="left:108px;top:129px;" width="12" height="10" viewBox="0 0 12 10"><path d="M1 5.5 L4.2 8.6 L11 1.4" fill="none" stroke="#c8c8c8" stroke-width="0.9"/></svg>
<div class="t" style="left:125.2px;top:127.2px;font-family:'Liberation Serif',serif;font-style:italic;font-size:11.5px;line-height:12px;color:#4a4a4a;-webkit-text-stroke:0.25px #4a4a4a;">fx</div>
<svg class="a" style="left:137.8px;top:132.2px;" width="8" height="5" viewBox="0 0 8 5"><path d="M0.8 0.8 L3.8 4 L6.8 0.8" fill="none" stroke="#aaa" stroke-width="0.8"/></svg>
<div class="a" style="left:150.40px;top:126.80px;width:889.60px;height:28.20px;background:#FFFFFF;border-radius:4px;"></div>
<div class="a" style="left:0.00px;top:159.50px;width:1024.00px;height:13.20px;background:#F0F2F4;"></div>
<div class="a" style="left:0.00px;top:159.50px;width:18.00px;height:307.50px;background:#EEF0F2;"></div>
<svg class="a" style="left:8px;top:162px;" width="9" height="9" viewBox="0 0 9 9"><path d="M8.2 0.6 V7.8 H1 Z" fill="#DCDFE2"/></svg>
<div class="a" style="left:591.00px;top:159.80px;width:49.10px;height:12.90px;background:#DFE1E1;"></div>
<div class="t" style="top:163.05px;font-size:8.8px;line-height:8.8px;color:#7a7a7a;left:-94.10px;width:300px;text-align:center;transform:scaleX(0.95);transform-origin:50% 50%;">B</div>
<div class="a" style="left:110.00px;top:160.50px;width:0.80px;height:12.20px;background:#E3E5E8;"></div>
<div class="t" style="top:163.05px;font-size:8.8px;line-height:8.8px;color:#7a7a7a;left:37.57px;width:300px;text-align:center;transform:scaleX(0.95);transform-origin:50% 50%;">C</div>
<div class="a" style="left:264.35px;top:160.50px;width:0.80px;height:12.20px;background:#E3E5E8;"></div>
<div class="t" style="top:163.05px;font-size:8.8px;line-height:8.8px;color:#7a7a7a;left:155.12px;width:300px;text-align:center;transform:scaleX(0.95);transform-origin:50% 50%;">D</div>
<div class="a" style="left:345.10px;top:160.50px;width:0.80px;height:12.20px;background:#E3E5E8;"></div>
<div class="t" style="top:163.05px;font-size:8.8px;line-height:8.8px;color:#7a7a7a;left:220.05px;width:300px;text-align:center;transform:scaleX(0.95);transform-origin:50% 50%;">E</div>
<div class="a" style="left:394.20px;top:160.50px;width:0.80px;height:12.20px;background:#E3E5E8;"></div>
<div class="t" style="top:163.05px;font-size:8.8px;line-height:8.8px;color:#7a7a7a;left:269.15px;width:300px;text-align:center;transform:scaleX(0.95);transform-origin:50% 50%;">F</div>
<div class="a" style="left:443.30px;top:160.50px;width:0.80px;height:12.20px;background:#E3E5E8;"></div>
<div class="t" style="top:163.05px;font-size:8.8px;line-height:8.8px;color:#7a7a7a;left:318.25px;width:300px;text-align:center;transform:scaleX(0.95);transform-origin:50% 50%;">G</div>
<div class="a" style="left:492.40px;top:160.50px;width:0.80px;height:12.20px;background:#E3E5E8;"></div>
<div class="t" style="top:163.05px;font-size:8.8px;line-height:8.8px;color:#7a7a7a;left:367.35px;width:300px;text-align:center;transform:scaleX(0.95);transform-origin:50% 50%;">H</div>
<div class="a" style="left:541.50px;top:160.50px;width:0.80px;height:12.20px;background:#E3E5E8;"></div>
<div class="t" style="top:163.05px;font-size:8.8px;line-height:8.8px;color:#7a7a7a;left:416.45px;width:300px;text-align:center;transform:scaleX(0.95);transform-origin:50% 50%;">I</div>
<div class="a" style="left:590.60px;top:160.50px;width:0.80px;height:12.20px;background:#E3E5E8;"></div>
<div class="t" style="top:163.05px;font-size:8.8px;line-height:8.8px;color:#4E7A5C;left:465.55px;width:300px;text-align:center;transform:scaleX(0.95);transform-origin:50% 50%;">J</div>
<div class="a" style="left:639.70px;top:160.50px;width:0.80px;height:12.20px;background:#E3E5E8;"></div>
<div class="t" style="top:163.05px;font-size:8.8px;line-height:8.8px;color:#7a7a7a;left:514.65px;width:300px;text-align:center;transform:scaleX(0.95);transform-origin:50% 50%;">K</div>
<div class="a" style="left:688.80px;top:160.50px;width:0.80px;height:12.20px;background:#E3E5E8;"></div>
<div class="t" style="top:163.05px;font-size:8.8px;line-height:8.8px;color:#7a7a7a;left:563.75px;width:300px;text-align:center;transform:scaleX(0.95);transform-origin:50% 50%;">L</div>
<div class="a" style="left:737.90px;top:160.50px;width:0.80px;height:12.20px;background:#E3E5E8;"></div>
<div class="t" style="top:163.05px;font-size:8.8px;line-height:8.8px;color:#7a7a7a;left:612.85px;width:300px;text-align:center;transform:scaleX(0.95);transform-origin:50% 50%;">M</div>
<div class="a" style="left:787.00px;top:160.50px;width:0.80px;height:12.20px;background:#E3E5E8;"></div>
<div class="t" style="top:163.05px;font-size:8.8px;line-height:8.8px;color:#7a7a7a;left:661.95px;width:300px;text-align:center;transform:scaleX(0.95);transform-origin:50% 50%;">N</div>
<div class="a" style="left:836.10px;top:160.50px;width:0.80px;height:12.20px;background:#E3E5E8;"></div>
<div class="t" style="top:163.05px;font-size:8.8px;line-height:8.8px;color:#7a7a7a;left:711.05px;width:300px;text-align:center;transform:scaleX(0.95);transform-origin:50% 50%;">O</div>
<div class="a" style="left:885.20px;top:160.50px;width:0.80px;height:12.20px;background:#E3E5E8;"></div>
<div class="t" style="top:163.05px;font-size:8.8px;line-height:8.8px;color:#7a7a7a;left:760.15px;width:300px;text-align:center;transform:scaleX(0.95);transform-origin:50% 50%;">P</div>
<div class="a" style="left:934.30px;top:160.50px;width:0.80px;height:12.20px;background:#E3E5E8;"></div>
<div class="t" style="top:163.05px;font-size:8.8px;line-height:8.8px;color:#7a7a7a;left:809.25px;width:300px;text-align:center;transform:scaleX(0.95);transform-origin:50% 50%;">Q</div>
<div class="a" style="left:983.40px;top:160.50px;width:0.80px;height:12.20px;background:#E3E5E8;"></div>
<div class="t" style="top:163.05px;font-size:8.8px;line-height:8.8px;color:#7a7a7a;left:858.35px;width:300px;text-align:center;transform:scaleX(0.95);transform-origin:50% 50%;">R</div>
<div class="a" style="left:1032.50px;top:160.50px;width:0.80px;height:12.20px;background:#E3E5E8;"></div>
<div class="a" style="left:0.00px;top:171.50px;width:1024.00px;height:1.20px;background:#DCD9D8;"></div>
<div class="a" style="left:591.00px;top:171.50px;width:49.10px;height:1.20px;background:#5B7763;"></div>
<div class="a" style="left:17.40px;top:172.70px;width:0.80px;height:294.30px;background:#D9DCE0;"></div>
<div class="a" style="left:0.00px;top:204.50px;width:17.60px;height:13.65px;background:#A6D9BD;"></div>
<div class="t" style="top:181.02px;font-size:8.6px;line-height:8.6px;color:#666;left:-140.60px;width:300px;text-align:center;transform:scaleX(0.95);transform-origin:50% 50%;">1</div>
<div class="a" style="left:0.00px;top:190.70px;width:17.40px;height:0.60px;background:#E6E8EB;"></div>
<div class="t" style="top:194.92px;font-size:8.6px;line-height:8.6px;color:#666;left:-140.60px;width:300px;text-align:center;transform:scaleX(0.95);transform-origin:50% 50%;">2</div>
<div class="a" style="left:0.00px;top:204.20px;width:17.40px;height:0.60px;background:#E6E8EB;"></div>
<div class="t" style="top:208.22px;font-size:8.6px;line-height:8.6px;color:#2A6E48;left:-140.60px;width:300px;text-align:center;transform:scaleX(0.95);transform-origin:50% 50%;">3</div>
<div class="a" style="left:0.00px;top:217.85px;width:17.40px;height:0.60px;background:#E6E8EB;"></div>
<div class="t" style="top:221.87px;font-size:8.6px;line-height:8.6px;color:#666;left:-140.60px;width:300px;text-align:center;transform:scaleX(0.95);transform-origin:50% 50%;">4</div>
<div class="a" style="left:0.00px;top:231.50px;width:17.40px;height:0.60px;background:#E6E8EB;"></div>
<div class="t" style="top:235.52px;font-size:8.6px;line-height:8.6px;color:#666;left:-140.60px;width:300px;text-align:center;transform:scaleX(0.95);transform-origin:50% 50%;">5</div>
<div class="a" style="left:0.00px;top:245.15px;width:17.40px;height:0.60px;background:#E6E8EB;"></div>
<div class="t" style="top:249.17px;font-size:8.6px;line-height:8.6px;color:#666;left:-140.60px;width:300px;text-align:center;transform:scaleX(0.95);transform-origin:50% 50%;">6</div>
<div class="a" style="left:0.00px;top:258.80px;width:17.40px;height:0.60px;background:#E6E8EB;"></div>
<div class="t" style="top:262.82px;font-size:8.6px;line-height:8.6px;color:#666;left:-140.60px;width:300px;text-align:center;transform:scaleX(0.95);transform-origin:50% 50%;">7</div>
<div class="a" style="left:0.00px;top:272.45px;width:17.40px;height:0.60px;background:#E6E8EB;"></div>
<div class="t" style="top:276.47px;font-size:8.6px;line-height:8.6px;color:#666;left:-140.60px;width:300px;text-align:center;transform:scaleX(0.95);transform-origin:50% 50%;">8</div>
<div class="a" style="left:0.00px;top:286.10px;width:17.40px;height:0.60px;background:#E6E8EB;"></div>
<div class="t" style="top:290.12px;font-size:8.6px;line-height:8.6px;color:#666;left:-140.60px;width:300px;text-align:center;transform:scaleX(0.95);transform-origin:50% 50%;">9</div>
<div class="a" style="left:0.00px;top:299.75px;width:17.40px;height:0.60px;background:#E6E8EB;"></div>
<div class="t" style="top:303.77px;font-size:8.6px;line-height:8.6px;color:#666;left:-140.60px;width:300px;text-align:center;transform:scaleX(0.95);transform-origin:50% 50%;">10</div>
<div class="a" style="left:0.00px;top:313.40px;width:17.40px;height:0.60px;background:#E6E8EB;"></div>
<div class="t" style="top:317.42px;font-size:8.6px;line-height:8.6px;color:#666;left:-140.60px;width:300px;text-align:center;transform:scaleX(0.95);transform-origin:50% 50%;">11</div>
<div class="a" style="left:0.00px;top:327.05px;width:17.40px;height:0.60px;background:#E6E8EB;"></div>
<div class="t" style="top:331.07px;font-size:8.6px;line-height:8.6px;color:#666;left:-140.60px;width:300px;text-align:center;transform:scaleX(0.95);transform-origin:50% 50%;">12</div>
<div class="a" style="left:0.00px;top:340.70px;width:17.40px;height:0.60px;background:#E6E8EB;"></div>
<div class="t" style="top:344.72px;font-size:8.6px;line-height:8.6px;color:#666;left:-140.60px;width:300px;text-align:center;transform:scaleX(0.95);transform-origin:50% 50%;">13</div>
<div class="a" style="left:0.00px;top:354.35px;width:17.40px;height:0.60px;background:#E6E8EB;"></div>
<div class="t" style="top:358.37px;font-size:8.6px;line-height:8.6px;color:#666;left:-140.60px;width:300px;text-align:center;transform:scaleX(0.95);transform-origin:50% 50%;">14</div>
<div class="a" style="left:0.00px;top:368.00px;width:17.40px;height:0.60px;background:#E6E8EB;"></div>
<div class="t" style="top:372.02px;font-size:8.6px;line-height:8.6px;color:#666;left:-140.60px;width:300px;text-align:center;transform:scaleX(0.95);transform-origin:50% 50%;">15</div>
<div class="a" style="left:0.00px;top:381.65px;width:17.40px;height:0.60px;background:#E6E8EB;"></div>
<div class="t" style="top:385.67px;font-size:8.6px;line-height:8.6px;color:#666;left:-140.60px;width:300px;text-align:center;transform:scaleX(0.95);transform-origin:50% 50%;">16</div>
<div class="a" style="left:0.00px;top:395.30px;width:17.40px;height:0.60px;background:#E6E8EB;"></div>
<div class="t" style="top:399.32px;font-size:8.6px;line-height:8.6px;color:#666;left:-140.60px;width:300px;text-align:center;transform:scaleX(0.95);transform-origin:50% 50%;">17</div>
<div class="a" style="left:0.00px;top:408.95px;width:17.40px;height:0.60px;background:#E6E8EB;"></div>
<div class="t" style="top:412.97px;font-size:8.6px;line-height:8.6px;color:#666;left:-140.60px;width:300px;text-align:center;transform:scaleX(0.95);transform-origin:50% 50%;">18</div>
<div class="a" style="left:0.00px;top:422.60px;width:17.40px;height:0.60px;background:#E6E8EB;"></div>
<div class="t" style="top:426.62px;font-size:8.6px;line-height:8.6px;color:#666;left:-140.60px;width:300px;text-align:center;transform:scaleX(0.95);transform-origin:50% 50%;">19</div>
<div class="a" style="left:0.00px;top:436.25px;width:17.40px;height:0.60px;background:#E6E8EB;"></div>
<div class="t" style="top:440.27px;font-size:8.6px;line-height:8.6px;color:#666;left:-140.60px;width:300px;text-align:center;transform:scaleX(0.95);transform-origin:50% 50%;">20</div>
<div class="a" style="left:0.00px;top:449.90px;width:17.40px;height:0.60px;background:#E6E8EB;"></div>
<div class="t" style="top:453.92px;font-size:8.6px;line-height:8.6px;color:#666;left:-140.60px;width:300px;text-align:center;transform:scaleX(0.95);transform-origin:50% 50%;">21</div>
<div class="a" style="left:0.00px;top:463.55px;width:17.40px;height:0.60px;background:#E6E8EB;"></div>
<div class="a" style="left:18.00px;top:172.70px;width:327.50px;height:18.30px;background:#E97132;"></div>
<div class="a" style="left:345.50px;top:172.70px;width:678.50px;height:18.30px;background:#F1A983;"></div>
<div class="t" style="top:178.09px;font-size:8.4px;line-height:8.4px;color:#33241A;font-weight:700;left:244.60px;width:300px;text-align:center;transform:scaleX(0.97);transform-origin:50% 50%;">Jan-2024</div>
<div class="a" style="left:443.10px;top:172.70px;width:1.20px;height:18.30px;background:#F6BC98;"></div>
<div class="t" style="top:178.09px;font-size:8.4px;line-height:8.4px;color:#33241A;font-weight:700;left:342.80px;width:300px;text-align:center;transform:scaleX(0.97);transform-origin:50% 50%;">Feb-2024</div>
<div class="a" style="left:541.30px;top:172.70px;width:1.20px;height:18.30px;background:#F6BC98;"></div>
<div class="t" style="top:178.09px;font-size:8.4px;line-height:8.4px;color:#33241A;font-weight:700;left:441.00px;width:300px;text-align:center;transform:scaleX(0.97);transform-origin:50% 50%;">Mar-2024</div>
<div class="a" style="left:639.50px;top:172.70px;width:1.20px;height:18.30px;background:#F6BC98;"></div>
<div class="t" style="top:178.09px;font-size:8.4px;line-height:8.4px;color:#33241A;font-weight:700;left:539.20px;width:300px;text-align:center;transform:scaleX(0.97);transform-origin:50% 50%;">Apr-2024</div>
<div class="a" style="left:737.70px;top:172.70px;width:1.20px;height:18.30px;background:#F6BC98;"></div>
<div class="t" style="top:178.09px;font-size:8.4px;line-height:8.4px;color:#33241A;font-weight:700;left:637.40px;width:300px;text-align:center;transform:scaleX(0.97);transform-origin:50% 50%;">May-2024</div>
<div class="a" style="left:835.90px;top:172.70px;width:1.20px;height:18.30px;background:#F6BC98;"></div>
<div class="t" style="top:178.09px;font-size:8.4px;line-height:8.4px;color:#33241A;font-weight:700;left:735.60px;width:300px;text-align:center;transform:scaleX(0.97);transform-origin:50% 50%;">Jun-2024</div>
<div class="a" style="left:934.10px;top:172.70px;width:1.20px;height:18.30px;background:#F6BC98;"></div>
<div class="t" style="top:178.09px;font-size:8.4px;line-height:8.4px;color:#33241A;font-weight:700;left:833.80px;width:300px;text-align:center;transform:scaleX(0.97);transform-origin:50% 50%;">Jul-2024</div>
<div class="a" style="left:1032.30px;top:172.70px;width:1.20px;height:18.30px;background:#F6BC98;"></div>
<div class="a" style="left:109.90px;top:172.70px;width:1.00px;height:31.80px;background:#F29A67;"></div>
<div class="a" style="left:264.25px;top:172.70px;width:1.00px;height:31.80px;background:#F29A67;"></div>
<div class="a" style="left:18.00px;top:190.50px;width:1006.00px;height:1.00px;background:#F3A173;"></div>
<div class="a" style="left:18.00px;top:191.50px;width:1006.00px;height:13.00px;background:#E97132;"></div>
<div class="a" style="left:345.00px;top:191.00px;width:1.00px;height:13.50px;background:#F29A67;"></div>
<div class="a" style="left:394.10px;top:191.00px;width:1.00px;height:13.50px;background:#F29A67;"></div>
<div class="a" style="left:443.20px;top:191.00px;width:1.00px;height:13.50px;background:#F29A67;"></div>
<div class="a" style="left:492.30px;top:191.00px;width:1.00px;height:13.50px;background:#F29A67;"></div>
<div class="a" style="left:541.40px;top:191.00px;width:1.00px;height:13.50px;background:#F29A67;"></div>
<div class="a" style="left:590.50px;top:191.00px;width:1.00px;height:13.50px;background:#F29A67;"></div>
<div class="a" style="left:639.60px;top:191.00px;width:1.00px;height:13.50px;background:#F29A67;"></div>
<div class="a" style="left:688.70px;top:191.00px;width:1.00px;height:13.50px;background:#F29A67;"></div>
<div class="a" style="left:737.80px;top:191.00px;width:1.00px;height:13.50px;background:#F29A67;"></div>
<div class="a" style="left:786.90px;top:191.00px;width:1.00px;height:13.50px;background:#F29A67;"></div>
<div class="a" style="left:836.00px;top:191.00px;width:1.00px;height:13.50px;background:#F29A67;"></div>
<div class="a" style="left:885.10px;top:191.00px;width:1.00px;height:13.50px;background:#F29A67;"></div>
<div class="a" style="left:934.20px;top:191.00px;width:1.00px;height:13.50px;background:#F29A67;"></div>
<div class="a" style="left:983.30px;top:191.00px;width:1.00px;height:13.50px;background:#F29A67;"></div>
<div class="t" style="top:195.49px;font-size:8.4px;line-height:8.4px;color:#FCE6D8;font-weight:700;left:-94.30px;width:300px;text-align:center;transform:scaleX(0.98);transform-origin:50% 50%;">KPI Group</div>
<div class="t" style="top:195.49px;font-size:8.4px;line-height:8.4px;color:#FCE6D8;font-weight:700;left:37.57px;width:300px;text-align:center;transform:scaleX(0.98);transform-origin:50% 50%;">KPI Name</div>
<div class="t" style="top:195.49px;font-size:8.4px;line-height:8.4px;color:#FCE6D8;font-weight:700;left:155.12px;width:300px;text-align:center;transform:scaleX(0.98);transform-origin:50% 50%;">Unit</div>
<div class="t" style="top:195.49px;font-size:8.4px;line-height:8.4px;color:#FCE6D8;font-weight:700;left:220.05px;width:300px;text-align:center;transform:scaleX(0.98);transform-origin:50% 50%;">MTD</div>
<div class="t" style="top:195.49px;font-size:8.4px;line-height:8.4px;color:#FCE6D8;font-weight:700;left:269.15px;width:300px;text-align:center;transform:scaleX(0.98);transform-origin:50% 50%;">YTD</div>
<div class="t" style="top:195.49px;font-size:8.4px;line-height:8.4px;color:#FCE6D8;font-weight:700;left:318.25px;width:300px;text-align:center;transform:scaleX(0.98);transform-origin:50% 50%;">MTD</div>
<div class="t" style="top:195.49px;font-size:8.4px;line-height:8.4px;color:#FCE6D8;font-weight:700;left:367.35px;width:300px;text-align:center;transform:scaleX(0.98);transform-origin:50% 50%;">YTD</div>
<div class="t" style="top:195.49px;font-size:8.4px;line-height:8.4px;color:#FCE6D8;font-weight:700;left:416.45px;width:300px;text-align:center;transform:scaleX(0.98);transform-origin:50% 50%;">MTD</div>
<div class="t" style="top:195.49px;font-size:8.4px;line-height:8.4px;color:#FCE6D8;font-weight:700;left:465.55px;width:300px;text-align:center;transform:scaleX(0.98);transform-origin:50% 50%;">YTD</div>
<div class="t" style="top:195.49px;font-size:8.4px;line-height:8.4px;color:#FCE6D8;font-weight:700;left:514.65px;width:300px;text-align:center;transform:scaleX(0.98);transform-origin:50% 50%;">MTD</div>
<div class="t" style="top:195.49px;font-size:8.4px;line-height:8.4px;color:#FCE6D8;font-weight:700;left:563.75px;width:300px;text-align:center;transform:scaleX(0.98);transform-origin:50% 50%;">YTD</div>
<div class="t" style="top:195.49px;font-size:8.4px;line-height:8.4px;color:#FCE6D8;font-weight:700;left:612.85px;width:300px;text-align:center;transform:scaleX(0.98);transform-origin:50% 50%;">MTD</div>
<div class="t" style="top:195.49px;font-size:8.4px;line-height:8.4px;color:#FCE6D8;font-weight:700;left:661.95px;width:300px;text-align:center;transform:scaleX(0.98);transform-origin:50% 50%;">YTD</div>
<div class="t" style="top:195.49px;font-size:8.4px;line-height:8.4px;color:#FCE6D8;font-weight:700;left:711.05px;width:300px;text-align:center;transform:scaleX(0.98);transform-origin:50% 50%;">MTD</div>
<div class="t" style="top:195.49px;font-size:8.4px;line-height:8.4px;color:#FCE6D8;font-weight:700;left:760.15px;width:300px;text-align:center;transform:scaleX(0.98);transform-origin:50% 50%;">YTD</div>
<div class="t" style="top:195.49px;font-size:8.4px;line-height:8.4px;color:#FCE6D8;font-weight:700;left:809.25px;width:300px;text-align:center;transform:scaleX(0.98);transform-origin:50% 50%;">MTD</div>
<div class="t" style="top:195.49px;font-size:8.4px;line-height:8.4px;color:#FCE6D8;font-weight:700;left:858.35px;width:300px;text-align:center;transform:scaleX(0.98);transform-origin:50% 50%;">YTD</div>
<div class="a" style="left:18.00px;top:204.50px;width:327.50px;height:262.50px;background:#FCEBE3;"></div>
<div class="a" style="left:345.50px;top:204.50px;width:678.50px;height:262.50px;background:#FFFFFF;"></div>
<div class="a" style="left:18.00px;top:217.75px;width:327.50px;height:0.80px;background:#FDF1EB;"></div>
<div class="a" style="left:345.50px;top:217.80px;width:678.50px;height:0.70px;background:#EEE3DF;"></div>
<div class="a" style="left:18.00px;top:231.40px;width:327.50px;height:0.80px;background:#FDF1EB;"></div>
<div class="a" style="left:345.50px;top:231.45px;width:678.50px;height:0.70px;background:#EEE3DF;"></div>
<div class="a" style="left:18.00px;top:245.05px;width:327.50px;height:0.80px;background:#FDF1EB;"></div>
<div class="a" style="left:345.50px;top:245.10px;width:678.50px;height:0.70px;background:#EEE3DF;"></div>
<div class="a" style="left:18.00px;top:258.70px;width:327.50px;height:0.80px;background:#FDF1EB;"></div>
<div class="a" style="left:345.50px;top:258.75px;width:678.50px;height:0.70px;background:#EEE3DF;"></div>
<div class="a" style="left:18.00px;top:272.35px;width:327.50px;height:0.80px;background:#FDF1EB;"></div>
<div class="a" style="left:345.50px;top:272.40px;width:678.50px;height:0.70px;background:#EEE3DF;"></div>
<div class="a" style="left:18.00px;top:286.00px;width:327.50px;height:0.80px;background:#FDF1EB;"></div>
<div class="a" style="left:345.50px;top:286.05px;width:678.50px;height:0.70px;background:#EEE3DF;"></div>
<div class="a" style="left:18.00px;top:299.65px;width:327.50px;height:0.80px;background:#FDF1EB;"></div>
<div class="a" style="left:345.50px;top:299.70px;width:678.50px;height:0.70px;background:#EEE3DF;"></div>
<div class="a" style="left:18.00px;top:313.30px;width:327.50px;height:0.80px;background:#FDF1EB;"></div>
<div class="a" style="left:345.50px;top:313.35px;width:678.50px;height:0.70px;background:#EEE3DF;"></div>
<div class="a" style="left:18.00px;top:326.95px;width:327.50px;height:0.80px;background:#FDF1EB;"></div>
<div class="a" style="left:345.50px;top:327.00px;width:678.50px;height:0.70px;background:#EEE3DF;"></div>
<div class="a" style="left:18.00px;top:340.60px;width:327.50px;height:0.80px;background:#FDF1EB;"></div>
<div class="a" style="left:345.50px;top:340.65px;width:678.50px;height:0.70px;background:#EEE3DF;"></div>
<div class="a" style="left:18.00px;top:354.25px;width:327.50px;height:0.80px;background:#FDF1EB;"></div>
<div class="a" style="left:345.50px;top:354.30px;width:678.50px;height:0.70px;background:#EEE3DF;"></div>
<div class="a" style="left:18.00px;top:367.90px;width:327.50px;height:0.80px;background:#FDF1EB;"></div>
<div class="a" style="left:345.50px;top:367.95px;width:678.50px;height:0.70px;background:#EEE3DF;"></div>
<div class="a" style="left:18.00px;top:381.55px;width:327.50px;height:0.80px;background:#FDF1EB;"></div>
<div class="a" style="left:345.50px;top:381.60px;width:678.50px;height:0.70px;background:#EEE3DF;"></div>
<div class="a" style="left:18.00px;top:395.20px;width:327.50px;height:0.80px;background:#FDF1EB;"></div>
<div class="a" style="left:345.50px;top:395.25px;width:678.50px;height:0.70px;background:#EEE3DF;"></div>
<div class="a" style="left:18.00px;top:408.85px;width:327.50px;height:0.80px;background:#FDF1EB;"></div>
<div class="a" style="left:345.50px;top:408.90px;width:678.50px;height:0.70px;background:#EEE3DF;"></div>
<div class="a" style="left:18.00px;top:422.50px;width:327.50px;height:0.80px;background:#FDF1EB;"></div>
<div class="a" style="left:345.50px;top:422.55px;width:678.50px;height:0.70px;background:#EEE3DF;"></div>
<div class="a" style="left:18.00px;top:436.15px;width:327.50px;height:0.80px;background:#FDF1EB;"></div>
<div class="a" style="left:345.50px;top:436.20px;width:678.50px;height:0.70px;background:#EEE3DF;"></div>
<div class="a" style="left:18.00px;top:449.80px;width:327.50px;height:0.80px;background:#FDF1EB;"></div>
<div class="a" style="left:345.50px;top:449.85px;width:678.50px;height:0.70px;background:#EEE3DF;"></div>
<div class="a" style="left:18.00px;top:463.45px;width:327.50px;height:0.80px;background:#FDF1EB;"></div>
<div class="a" style="left:345.50px;top:463.50px;width:678.50px;height:0.70px;background:#EEE3DF;"></div>
<div class="a" style="left:18.00px;top:477.10px;width:327.50px;height:0.80px;background:#FDF1EB;"></div>
<div class="a" style="left:345.50px;top:477.15px;width:678.50px;height:0.70px;background:#EEE3DF;"></div>
<div class="a" style="left:110.00px;top:204.50px;width:0.80px;height:262.50px;background:#FDF1EB;"></div>
<div class="a" style="left:264.35px;top:204.50px;width:0.80px;height:262.50px;background:#FDF1EB;"></div>
<div class="a" style="left:345.15px;top:204.50px;width:0.70px;height:262.50px;background:#EBDDD8;"></div>
<div class="a" style="left:394.25px;top:204.50px;width:0.70px;height:262.50px;background:#EBDDD8;"></div>
<div class="a" style="left:443.35px;top:204.50px;width:0.70px;height:262.50px;background:#EBDDD8;"></div>
<div class="a" style="left:492.45px;top:204.50px;width:0.70px;height:262.50px;background:#EBDDD8;"></div>
<div class="a" style="left:541.55px;top:204.50px;width:0.70px;height:262.50px;background:#EBDDD8;"></div>
<div class="a" style="left:590.65px;top:204.50px;width:0.70px;height:262.50px;background:#EBDDD8;"></div>
<div class="a" style="left:639.75px;top:204.50px;width:0.70px;height:262.50px;background:#EBDDD8;"></div>
<div class="a" style="left:688.85px;top:204.50px;width:0.70px;height:262.50px;background:#EBDDD8;"></div>
<div class="a" style="left:737.95px;top:204.50px;width:0.70px;height:262.50px;background:#EBDDD8;"></div>
<div class="a" style="left:787.05px;top:204.50px;width:0.70px;height:262.50px;background:#EBDDD8;"></div>
<div class="a" style="left:836.15px;top:204.50px;width:0.70px;height:262.50px;background:#EBDDD8;"></div>
<div class="a" style="left:885.25px;top:204.50px;width:0.70px;height:262.50px;background:#EBDDD8;"></div>
<div class="a" style="left:934.35px;top:204.50px;width:0.70px;height:262.50px;background:#EBDDD8;"></div>
<div class="a" style="left:983.45px;top:204.50px;width:0.70px;height:262.50px;background:#EBDDD8;"></div>
<div class="t" style="top:209.21px;font-size:7.9px;line-height:7.9px;color:#3c3c3c;left:-94.30px;width:300px;text-align:center;transform:scaleX(0.95);transform-origin:50% 50%;-webkit-text-stroke:0.12px #3c3c3c;">Incident Management</div>
<div class="t" style="top:209.21px;font-size:7.9px;line-height:7.9px;color:#3c3c3c;left:37.57px;width:300px;text-align:center;transform:scaleX(0.95);transform-origin:50% 50%;-webkit-text-stroke:0.12px #3c3c3c;">Number of Incidents Detected</div>
<div class="t" style="top:209.21px;font-size:7.9px;line-height:7.9px;color:#3c3c3c;left:155.12px;width:300px;text-align:center;transform:scaleX(0.95);transform-origin:50% 50%;-webkit-text-stroke:0.12px #3c3c3c;">Count</div>
<div class="t" style="top:208.45px;font-size:8.8px;line-height:8.8px;color:#3c3c3c;left:220.35px;width:300px;text-align:center;transform:scaleX(0.8);transform-origin:50% 50%;-webkit-text-stroke:0.12px #3c3c3c;">82.0</div>
<div class="t" style="top:208.45px;font-size:8.8px;line-height:8.8px;color:#3c3c3c;left:269.45px;width:300px;text-align:center;transform:scaleX(0.8);transform-origin:50% 50%;-webkit-text-stroke:0.12px #3c3c3c;">81.0</div>
<div class="t" style="top:208.45px;font-size:8.8px;line-height:8.8px;color:#3c3c3c;left:318.55px;width:300px;text-align:center;transform:scaleX(0.8);transform-origin:50% 50%;-webkit-text-stroke:0.12px #3c3c3c;">98.0</div>
<div class="t" style="top:208.45px;font-size:8.8px;line-height:8.8px;color:#3c3c3c;left:367.65px;width:300px;text-align:center;transform:scaleX(0.8);transform-origin:50% 50%;-webkit-text-stroke:0.12px #3c3c3c;">116.0</div>
<div class="t" style="top:208.45px;font-size:8.8px;line-height:8.8px;color:#3c3c3c;left:416.75px;width:300px;text-align:center;transform:scaleX(0.8);transform-origin:50% 50%;-webkit-text-stroke:0.12px #3c3c3c;">70.0</div>
<div class="t" style="top:208.45px;font-size:8.8px;line-height:8.8px;color:#3c3c3c;left:465.85px;width:300px;text-align:center;transform:scaleX(0.8);transform-origin:50% 50%;-webkit-text-stroke:0.12px #3c3c3c;">76.0</div>
<div class="t" style="top:208.45px;font-size:8.8px;line-height:8.8px;color:#3c3c3c;left:514.95px;width:300px;text-align:center;transform:scaleX(0.8);transform-origin:50% 50%;-webkit-text-stroke:0.12px #3c3c3c;">124.0</div>
<div class="t" style="top:208.45px;font-size:8.8px;line-height:8.8px;color:#3c3c3c;left:564.05px;width:300px;text-align:center;transform:scaleX(0.8);transform-origin:50% 50%;-webkit-text-stroke:0.12px #3c3c3c;">70.0</div>
<div class="t" style="top:208.45px;font-size:8.8px;line-height:8.8px;color:#3c3c3c;left:613.15px;width:300px;text-align:center;transform:scaleX(0.8);transform-origin:50% 50%;-webkit-text-stroke:0.12px #3c3c3c;">93.0</div>
<div class="t" style="top:208.45px;font-size:8.8px;line-height:8.8px;color:#3c3c3c;left:662.25px;width:300px;text-align:center;transform:scaleX(0.8);transform-origin:50% 50%;-webkit-text-stroke:0.12px #3c3c3c;">111.0</div>
<div class="t" style="top:208.45px;font-size:8.8px;line-height:8.8px;color:#3c3c3c;left:711.35px;width:300px;text-align:center;transform:scaleX(0.8);transform-origin:50% 50%;-webkit-text-stroke:0.12px #3c3c3c;">71.0</div>
<div class="t" style="top:208.45px;font-size:8.8px;line-height:8.8px;color:#3c3c3c;left:760.45px;width:300px;text-align:center;transform:scaleX(0.8);transform-origin:50% 50%;-webkit-text-stroke:0.12px #3c3c3c;">90.0</div>
<div class="t" style="top:208.45px;font-size:8.8px;line-height:8.8px;color:#3c3c3c;left:809.55px;width:300px;text-align:center;transform:scaleX(0.8);transform-origin:50% 50%;-webkit-text-stroke:0.12px #3c3c3c;">125.0</div>
<div class="t" style="top:208.45px;font-size:8.8px;line-height:8.8px;color:#3c3c3c;left:858.65px;width:300px;text-align:center;transform:scaleX(0.8);transform-origin:50% 50%;-webkit-text-stroke:0.12px #3c3c3c;">114.0</div>
<div class="t" style="top:222.86px;font-size:7.9px;line-height:7.9px;color:#3c3c3c;left:-94.30px;width:300px;text-align:center;transform:scaleX(0.95);transform-origin:50% 50%;-webkit-text-stroke:0.12px #3c3c3c;">Incident Management</div>
<div class="t" style="top:222.86px;font-size:7.9px;line-height:7.9px;color:#3c3c3c;left:37.57px;width:300px;text-align:center;transform:scaleX(0.95);transform-origin:50% 50%;-webkit-text-stroke:0.12px #3c3c3c;">Incident Response Time</div>
<div class="t" style="top:222.86px;font-size:7.9px;line-height:7.9px;color:#3c3c3c;left:155.12px;width:300px;text-align:center;transform:scaleX(0.95);transform-origin:50% 50%;-webkit-text-stroke:0.12px #3c3c3c;">Hours</div>
<div class="t" style="top:222.10px;font-size:8.8px;line-height:8.8px;color:#3c3c3c;left:220.35px;width:300px;text-align:center;transform:scaleX(0.8);transform-origin:50% 50%;-webkit-text-stroke:0.12px #3c3c3c;">95.0</div>
<div class="t" style="top:222.10px;font-size:8.8px;line-height:8.8px;color:#3c3c3c;left:269.45px;width:300px;text-align:center;transform:scaleX(0.8);transform-origin:50% 50%;-webkit-text-stroke:0.12px #3c3c3c;">118.0</div>
<div class="t" style="top:222.10px;font-size:8.8px;line-height:8.8px;color:#3c3c3c;left:318.55px;width:300px;text-align:center;transform:scaleX(0.8);transform-origin:50% 50%;-webkit-text-stroke:0.12px #3c3c3c;">120.0</div>
<div class="t" style="top:222.10px;font-size:8.8px;line-height:8.8px;color:#3c3c3c;left:367.65px;width:300px;text-align:center;transform:scaleX(0.8);transform-origin:50% 50%;-webkit-text-stroke:0.12px #3c3c3c;">96.0</div>
<div class="t" style="top:222.10px;font-size:8.8px;line-height:8.8px;color:#3c3c3c;left:416.75px;width:300px;text-align:center;transform:scaleX(0.8);transform-origin:50% 50%;-webkit-text-stroke:0.12px #3c3c3c;">88.0</div>
<div class="t" style="top:222.10px;font-size:8.8px;line-height:8.8px;color:#3c3c3c;left:465.85px;width:300px;text-align:center;transform:scaleX(0.8);transform-origin:50% 50%;-webkit-text-stroke:0.12px #3c3c3c;">97.0</div>
<div class="t" style="top:222.10px;font-size:8.8px;line-height:8.8px;color:#3c3c3c;left:514.95px;width:300px;text-align:center;transform:scaleX(0.8);transform-origin:50% 50%;-webkit-text-stroke:0.12px #3c3c3c;">70.0</div>
<div class="t" style="top:222.10px;font-size:8.8px;line-height:8.8px;color:#3c3c3c;left:564.05px;width:300px;text-align:center;transform:scaleX(0.8);transform-origin:50% 50%;-webkit-text-stroke:0.12px #3c3c3c;">80.0</div>
<div class="t" style="top:222.10px;font-size:8.8px;line-height:8.8px;color:#3c3c3c;left:613.15px;width:300px;text-align:center;transform:scaleX(0.8);transform-origin:50% 50%;-webkit-text-stroke:0.12px #3c3c3c;">88.0</div>
<div class="t" style="top:222.10px;font-size:8.8px;line-height:8.8px;color:#3c3c3c;left:662.25px;width:300px;text-align:center;transform:scaleX(0.8);transform-origin:50% 50%;-webkit-text-stroke:0.12px #3c3c3c;">114.0</div>
<div class="t" style="top:222.10px;font-size:8.8px;line-height:8.8px;color:#3c3c3c;left:711.35px;width:300px;text-align:center;transform:scaleX(0.8);transform-origin:50% 50%;-webkit-text-stroke:0.12px #3c3c3c;">86.0</div>
<div class="t" style="top:222.10px;font-size:8.8px;line-height:8.8px;color:#3c3c3c;left:760.45px;width:300px;text-align:center;transform:scaleX(0.8);transform-origin:50% 50%;-webkit-text-stroke:0.12px #3c3c3c;">83.0</div>
<div class="t" style="top:222.10px;font-size:8.8px;line-height:8.8px;color:#3c3c3c;left:809.55px;width:300px;text-align:center;transform:scaleX(0.8);transform-origin:50% 50%;-webkit-text-stroke:0.12px #3c3c3c;">79.0</div>
<div class="t" style="top:222.10px;font-size:8.8px;line-height:8.8px;color:#3c3c3c;left:858.65px;width:300px;text-align:center;transform:scaleX(0.8);transform-origin:50% 50%;-webkit-text-stroke:0.12px #3c3c3c;">86.0</div>
<div class="t" style="top:236.51px;font-size:7.9px;line-height:7.9px;color:#3c3c3c;left:-94.30px;width:300px;text-align:center;transform:scaleX(0.95);transform-origin:50% 50%;-webkit-text-stroke:0.12px #3c3c3c;">Incident Management</div>
<div class="t" style="top:236.51px;font-size:7.9px;line-height:7.9px;color:#3c3c3c;left:37.57px;width:300px;text-align:center;transform:scaleX(0.95);transform-origin:50% 50%;-webkit-text-stroke:0.12px #3c3c3c;">Incident Resolution Time</div>
<div class="t" style="top:236.51px;font-size:7.9px;line-height:7.9px;color:#3c3c3c;left:155.12px;width:300px;text-align:center;transform:scaleX(0.95);transform-origin:50% 50%;-webkit-text-stroke:0.12px #3c3c3c;">Hours</div>
<div class="t" style="top:235.75px;font-size:8.8px;line-height:8.8px;color:#3c3c3c;left:220.35px;width:300px;text-align:center;transform:scaleX(0.8);transform-origin:50% 50%;-webkit-text-stroke:0.12px #3c3c3c;">101.0</div>
<div class="t" style="top:235.75px;font-size:8.8px;line-height:8.8px;color:#3c3c3c;left:269.45px;width:300px;text-align:center;transform:scaleX(0.8);transform-origin:50% 50%;-webkit-text-stroke:0.12px #3c3c3c;">108.0</div>
<div class="t" style="top:235.75px;font-size:8.8px;line-height:8.8px;color:#3c3c3c;left:318.55px;width:300px;text-align:center;transform:scaleX(0.8);transform-origin:50% 50%;-webkit-text-stroke:0.12px #3c3c3c;">80.0</div>
<div class="t" style="top:235.75px;font-size:8.8px;line-height:8.8px;color:#3c3c3c;left:367.65px;width:300px;text-align:center;transform:scaleX(0.8);transform-origin:50% 50%;-webkit-text-stroke:0.12px #3c3c3c;">86.0</div>
<div class="t" style="top:235.75px;font-size:8.8px;line-height:8.8px;color:#3c3c3c;left:416.75px;width:300px;text-align:center;transform:scaleX(0.8);transform-origin:50% 50%;-webkit-text-stroke:0.12px #3c3c3c;">93.0</div>
<div class="t" style="top:235.75px;font-size:8.8px;line-height:8.8px;color:#3c3c3c;left:465.85px;width:300px;text-align:center;transform:scaleX(0.8);transform-origin:50% 50%;-webkit-text-stroke:0.12px #3c3c3c;">76.0</div>
<div class="t" style="top:235.75px;font-size:8.8px;line-height:8.8px;color:#3c3c3c;left:514.95px;width:300px;text-align:center;transform:scaleX(0.8);transform-origin:50% 50%;-webkit-text-stroke:0.12px #3c3c3c;">82.0</div>
<div class="t" style="top:235.75px;font-size:8.8px;line-height:8.8px;color:#3c3c3c;left:564.05px;width:300px;text-align:center;transform:scaleX(0.8);transform-origin:50% 50%;-webkit-text-stroke:0.12px #3c3c3c;">110.0</div>
<div class="t" style="top:235.75px;font-size:8.8px;line-height:8.8px;color:#3c3c3c;left:613.15px;width:300px;text-align:center;transform:scaleX(0.8);transform-origin:50% 50%;-webkit-text-stroke:0.12px #3c3c3c;">87.0</div>
<div class="t" style="top:235.75px;font-size:8.8px;line-height:8.8px;color:#3c3c3c;left:662.25px;width:300px;text-align:center;transform:scaleX(0.8);transform-origin:50% 50%;-webkit-text-stroke:0.12px #3c3c3c;">87.0</div>
<div class="t" style="top:235.75px;font-size:8.8px;line-height:8.8px;color:#3c3c3c;left:711.35px;width:300px;text-align:center;transform:scaleX(0.8);transform-origin:50% 50%;-webkit-text-stroke:0.12px #3c3c3c;">108.0</div>
<div class="t" style="top:235.75px;font-size:8.8px;line-height:8.8px;color:#3c3c3c;left:760.45px;width:300px;text-align:center;transform:scaleX(0.8);transform-origin:50% 50%;-webkit-text-stroke:0.12px #3c3c3c;">91.0</div>
<div class="t" style="top:235.75px;font-size:8.8px;line-height:8.8px;color:#3c3c3c;left:809.55px;width:300px;text-align:center;transform:scaleX(0.8);transform-origin:50% 50%;-webkit-text-stroke:0.12px #3c3c3c;">72.0</div>
<div class="t" style="top:235.75px;font-size:8.8px;line-height:8.8px;color:#3c3c3c;left:858.65px;width:300px;text-align:center;transform:scaleX(0.8);transform-origin:50% 50%;-webkit-text-stroke:0.12px #3c3c3c;">115.0</div>
<div class="t" style="top:250.16px;font-size:7.9px;line-height:7.9px;color:#3c3c3c;left:-94.30px;width:300px;text-align:center;transform:scaleX(0.95);transform-origin:50% 50%;-webkit-text-stroke:0.12px #3c3c3c;">Incident Management</div>
<div class="t" style="top:250.16px;font-size:7.9px;line-height:7.9px;color:#3c3c3c;left:37.57px;width:300px;text-align:center;transform:scaleX(0.95);transform-origin:50% 50%;-webkit-text-stroke:0.12px #3c3c3c;">False Positive Rate</div>
<div class="t" style="top:250.16px;font-size:7.9px;line-height:7.9px;color:#3c3c3c;left:155.12px;width:300px;text-align:center;transform:scaleX(0.95);transform-origin:50% 50%;-webkit-text-stroke:0.12px #3c3c3c;">(%)</div>
<div class="t" style="top:249.40px;font-size:8.8px;line-height:8.8px;color:#3c3c3c;left:220.35px;width:300px;text-align:center;transform:scaleX(0.8);transform-origin:50% 50%;-webkit-text-stroke:0.12px #3c3c3c;">100.0</div>
<div class="t" style="top:249.40px;font-size:8.8px;line-height:8.8px;color:#3c3c3c;left:269.45px;width:300px;text-align:center;transform:scaleX(0.8);transform-origin:50% 50%;-webkit-text-stroke:0.12px #3c3c3c;">84.0</div>
<div class="t" style="top:249.40px;font-size:8.8px;line-height:8.8px;color:#3c3c3c;left:318.55px;width:300px;text-align:center;transform:scaleX(0.8);transform-origin:50% 50%;-webkit-text-stroke:0.12px #3c3c3c;">94.0</div>
<div class="t" style="top:249.40px;font-size:8.8px;line-height:8.8px;color:#3c3c3c;left:367.65px;width:300px;text-align:center;transform:scaleX(0.8);transform-origin:50% 50%;-webkit-text-stroke:0.12px #3c3c3c;">113.0</div>
<div class="t" style="top:249.40px;font-size:8.8px;line-height:8.8px;color:#3c3c3c;left:416.75px;width:300px;text-align:center;transform:scaleX(0.8);transform-origin:50% 50%;-webkit-text-stroke:0.12px #3c3c3c;">102.0</div>
<div class="t" style="top:249.40px;font-size:8.8px;line-height:8.8px;color:#3c3c3c;left:465.85px;width:300px;text-align:center;transform:scaleX(0.8);transform-origin:50% 50%;-webkit-text-stroke:0.12px #3c3c3c;">118.0</div>
<div class="t" style="top:249.40px;font-size:8.8px;line-height:8.8px;color:#3c3c3c;left:514.95px;width:300px;text-align:center;transform:scaleX(0.8);transform-origin:50% 50%;-webkit-text-stroke:0.12px #3c3c3c;">106.0</div>
<div class="t" style="top:249.40px;font-size:8.8px;line-height:8.8px;color:#3c3c3c;left:564.05px;width:300px;text-align:center;transform:scaleX(0.8);transform-origin:50% 50%;-webkit-text-stroke:0.12px #3c3c3c;">84.0</div>
<div class="t" style="top:249.40px;font-size:8.8px;line-height:8.8px;color:#3c3c3c;left:613.15px;width:300px;text-align:center;transform:scaleX(0.8);transform-origin:50% 50%;-webkit-text-stroke:0.12px #3c3c3c;">122.0</div>
<div class="t" style="top:249.40px;font-size:8.8px;line-height:8.8px;color:#3c3c3c;left:662.25px;width:300px;text-align:center;transform:scaleX(0.8);transform-origin:50% 50%;-webkit-text-stroke:0.12px #3c3c3c;">117.0</div>
<div class="t" style="top:249.40px;font-size:8.8px;line-height:8.8px;color:#3c3c3c;left:711.35px;width:300px;text-align:center;transform:scaleX(0.8);transform-origin:50% 50%;-webkit-text-stroke:0.12px #3c3c3c;">117.0</div>
<div class="t" style="top:249.40px;font-size:8.8px;line-height:8.8px;color:#3c3c3c;left:760.45px;width:300px;text-align:center;transform:scaleX(0.8);transform-origin:50% 50%;-webkit-text-stroke:0.12px #3c3c3c;">96.0</div>
<div class="t" style="top:249.40px;font-size:8.8px;line-height:8.8px;color:#3c3c3c;left:809.55px;width:300px;text-align:center;transform:scaleX(0.8);transform-origin:50% 50%;-webkit-text-stroke:0.12px #3c3c3c;">108.0</div>
<div class="t" style="top:249.40px;font-size:8.8px;line-height:8.8px;color:#3c3c3c;left:858.65px;width:300px;text-align:center;transform:scaleX(0.8);transform-origin:50% 50%;-webkit-text-stroke:0.12px #3c3c3c;">92.0</div>
<div class="t" style="top:263.81px;font-size:7.9px;line-height:7.9px;color:#3c3c3c;left:-94.30px;width:300px;text-align:center;transform:scaleX(0.95);transform-origin:50% 50%;-webkit-text-stroke:0.12px #3c3c3c;">Threat Detection</div>
<div class="t" style="top:263.81px;font-size:7.9px;line-height:7.9px;color:#3c3c3c;left:37.57px;width:300px;text-align:center;transform:scaleX(0.95);transform-origin:50% 50%;-webkit-text-stroke:0.12px #3c3c3c;">Detection Rate</div>
<div class="t" style="top:263.81px;font-size:7.9px;line-height:7.9px;color:#3c3c3c;left:155.12px;width:300px;text-align:center;transform:scaleX(0.95);transform-origin:50% 50%;-webkit-text-stroke:0.12px #3c3c3c;">(%)</div>
<div class="t" style="top:263.05px;font-size:8.8px;line-height:8.8px;color:#3c3c3c;left:220.35px;width:300px;text-align:center;transform:scaleX(0.8);transform-origin:50% 50%;-webkit-text-stroke:0.12px #3c3c3c;">116.0</div>
<div class="t" style="top:263.05px;font-size:8.8px;line-height:8.8px;color:#3c3c3c;left:269.45px;width:300px;text-align:center;transform:scaleX(0.8);transform-origin:50% 50%;-webkit-text-stroke:0.12px #3c3c3c;">115.0</div>
<div class="t" style="top:263.05px;font-size:8.8px;line-height:8.8px;color:#3c3c3c;left:318.55px;width:300px;text-align:center;transform:scaleX(0.8);transform-origin:50% 50%;-webkit-text-stroke:0.12px #3c3c3c;">111.0</div>
<div class="t" style="top:263.05px;font-size:8.8px;line-height:8.8px;color:#3c3c3c;left:367.65px;width:300px;text-align:center;transform:scaleX(0.8);transform-origin:50% 50%;-webkit-text-stroke:0.12px #3c3c3c;">89.0</div>
<div class="t" style="top:263.05px;font-size:8.8px;line-height:8.8px;color:#3c3c3c;left:416.75px;width:300px;text-align:center;transform:scaleX(0.8);transform-origin:50% 50%;-webkit-text-stroke:0.12px #3c3c3c;">105.0</div>
<div class="t" style="top:263.05px;font-size:8.8px;line-height:8.8px;color:#3c3c3c;left:465.85px;width:300px;text-align:center;transform:scaleX(0.8);transform-origin:50% 50%;-webkit-text-stroke:0.12px #3c3c3c;">108.0</div>
<div class="t" style="top:263.05px;font-size:8.8px;line-height:8.8px;color:#3c3c3c;left:514.95px;width:300px;text-align:center;transform:scaleX(0.8);transform-origin:50% 50%;-webkit-text-stroke:0.12px #3c3c3c;">111.0</div>
<div class="t" style="top:263.05px;font-size:8.8px;line-height:8.8px;color:#3c3c3c;left:564.05px;width:300px;text-align:center;transform:scaleX(0.8);transform-origin:50% 50%;-webkit-text-stroke:0.12px #3c3c3c;">114.0</div>
<div class="t" style="top:263.05px;font-size:8.8px;line-height:8.8px;color:#3c3c3c;left:613.15px;width:300px;text-align:center;transform:scaleX(0.8);transform-origin:50% 50%;-webkit-text-stroke:0.12px #3c3c3c;">83.0</div>
<div class="t" style="top:263.05px;font-size:8.8px;line-height:8.8px;color:#3c3c3c;left:662.25px;width:300px;text-align:center;transform:scaleX(0.8);transform-origin:50% 50%;-webkit-text-stroke:0.12px #3c3c3c;">120.0</div>
<div class="t" style="top:263.05px;font-size:8.8px;line-height:8.8px;color:#3c3c3c;left:711.35px;width:300px;text-align:center;transform:scaleX(0.8);transform-origin:50% 50%;-webkit-text-stroke:0.12px #3c3c3c;">109.0</div>
<div class="t" style="top:263.05px;font-size:8.8px;line-height:8.8px;color:#3c3c3c;left:760.45px;width:300px;text-align:center;transform:scaleX(0.8);transform-origin:50% 50%;-webkit-text-stroke:0.12px #3c3c3c;">96.0</div>
<div class="t" style="top:263.05px;font-size:8.8px;line-height:8.8px;color:#3c3c3c;left:809.55px;width:300px;text-align:center;transform:scaleX(0.8);transform-origin:50% 50%;-webkit-text-stroke:0.12px #3c3c3c;">89.0</div>
<div class="t" style="top:263.05px;font-size:8.8px;line-height:8.8px;color:#3c3c3c;left:858.65px;width:300px;text-align:center;transform:scaleX(0.8);transform-origin:50% 50%;-webkit-text-stroke:0.12px #3c3c3c;">88.0</div>
<div class="t" style="top:277.46px;font-size:7.9px;line-height:7.9px;color:#3c3c3c;left:-94.30px;width:300px;text-align:center;transform:scaleX(0.95);transform-origin:50% 50%;-webkit-text-stroke:0.12px #3c3c3c;">Threat Detection</div>
<div class="t" style="top:277.46px;font-size:7.9px;line-height:7.9px;color:#3c3c3c;left:37.57px;width:300px;text-align:center;transform:scaleX(0.95);transform-origin:50% 50%;-webkit-text-stroke:0.12px #3c3c3c;">Threat Severity Distribution</div>
<div class="t" style="top:277.46px;font-size:7.9px;line-height:7.9px;color:#3c3c3c;left:155.12px;width:300px;text-align:center;transform:scaleX(0.95);transform-origin:50% 50%;-webkit-text-stroke:0.12px #3c3c3c;">Count</div>
<div class="t" style="top:276.70px;font-size:8.8px;line-height:8.8px;color:#3c3c3c;left:220.35px;width:300px;text-align:center;transform:scaleX(0.8);transform-origin:50% 50%;-webkit-text-stroke:0.12px #3c3c3c;">80.0</div>
<div class="t" style="top:276.70px;font-size:8.8px;line-height:8.8px;color:#3c3c3c;left:269.45px;width:300px;text-align:center;transform:scaleX(0.8);transform-origin:50% 50%;-webkit-text-stroke:0.12px #3c3c3c;">113.0</div>
<div class="t" style="top:276.70px;font-size:8.8px;line-height:8.8px;color:#3c3c3c;left:318.55px;width:300px;text-align:center;transform:scaleX(0.8);transform-origin:50% 50%;-webkit-text-stroke:0.12px #3c3c3c;">70.0</div>
<div class="t" style="top:276.70px;font-size:8.8px;line-height:8.8px;color:#3c3c3c;left:367.65px;width:300px;text-align:center;transform:scaleX(0.8);transform-origin:50% 50%;-webkit-text-stroke:0.12px #3c3c3c;">89.0</div>
<div class="t" style="top:276.70px;font-size:8.8px;line-height:8.8px;color:#3c3c3c;left:416.75px;width:300px;text-align:center;transform:scaleX(0.8);transform-origin:50% 50%;-webkit-text-stroke:0.12px #3c3c3c;">89.0</div>
<div class="t" style="top:276.70px;font-size:8.8px;line-height:8.8px;color:#3c3c3c;left:465.85px;width:300px;text-align:center;transform:scaleX(0.8);transform-origin:50% 50%;-webkit-text-stroke:0.12px #3c3c3c;">84.0</div>
<div class="t" style="top:276.70px;font-size:8.8px;line-height:8.8px;color:#3c3c3c;left:514.95px;width:300px;text-align:center;transform:scaleX(0.8);transform-origin:50% 50%;-webkit-text-stroke:0.12px #3c3c3c;">121.0</div>
<div class="t" style="top:276.70px;font-size:8.8px;line-height:8.8px;color:#3c3c3c;left:564.05px;width:300px;text-align:center;transform:scaleX(0.8);transform-origin:50% 50%;-webkit-text-stroke:0.12px #3c3c3c;">125.0</div>
<div class="t" style="top:276.70px;font-size:8.8px;line-height:8.8px;color:#3c3c3c;left:613.15px;width:300px;text-align:center;transform:scaleX(0.8);transform-origin:50% 50%;-webkit-text-stroke:0.12px #3c3c3c;">73.0</div>
<div class="t" style="top:276.70px;font-size:8.8px;line-height:8.8px;color:#3c3c3c;left:662.25px;width:300px;text-align:center;transform:scaleX(0.8);transform-origin:50% 50%;-webkit-text-stroke:0.12px #3c3c3c;">106.0</div>
<div class="t" style="top:276.70px;font-size:8.8px;line-height:8.8px;color:#3c3c3c;left:711.35px;width:300px;text-align:center;transform:scaleX(0.8);transform-origin:50% 50%;-webkit-text-stroke:0.12px #3c3c3c;">88.0</div>
<div class="t" style="top:276.70px;font-size:8.8px;line-height:8.8px;color:#3c3c3c;left:760.45px;width:300px;text-align:center;transform:scaleX(0.8);transform-origin:50% 50%;-webkit-text-stroke:0.12px #3c3c3c;">81.0</div>
<div class="t" style="top:276.70px;font-size:8.8px;line-height:8.8px;color:#3c3c3c;left:809.55px;width:300px;text-align:center;transform:scaleX(0.8);transform-origin:50% 50%;-webkit-text-stroke:0.12px #3c3c3c;">102.0</div>
<div class="t" style="top:276.70px;font-size:8.8px;line-height:8.8px;color:#3c3c3c;left:858.65px;width:300px;text-align:center;transform:scaleX(0.8);transform-origin:50% 50%;-webkit-text-stroke:0.12px #3c3c3c;">111.0</div>
<div class="t" style="top:291.11px;font-size:7.9px;line-height:7.9px;color:#3c3c3c;left:-94.30px;width:300px;text-align:center;transform:scaleX(0.95);transform-origin:50% 50%;-webkit-text-stroke:0.12px #3c3c3c;">Risk Assessment</div>
<div class="t" style="top:291.11px;font-size:7.9px;line-height:7.9px;color:#3c3c3c;left:37.57px;width:300px;text-align:center;transform:scaleX(0.95);transform-origin:50% 50%;-webkit-text-stroke:0.12px #3c3c3c;">Vulnerability Patch Time</div>
<div class="t" style="top:291.11px;font-size:7.9px;line-height:7.9px;color:#3c3c3c;left:155.12px;width:300px;text-align:center;transform:scaleX(0.95);transform-origin:50% 50%;-webkit-text-stroke:0.12px #3c3c3c;">Days</div>
<div class="t" style="top:290.35px;font-size:8.8px;line-height:8.8px;color:#3c3c3c;left:220.35px;width:300px;text-align:center;transform:scaleX(0.8);transform-origin:50% 50%;-webkit-text-stroke:0.12px #3c3c3c;">72.0</div>
<div class="t" style="top:290.35px;font-size:8.8px;line-height:8.8px;color:#3c3c3c;left:269.45px;width:300px;text-align:center;transform:scaleX(0.8);transform-origin:50% 50%;-webkit-text-stroke:0.12px #3c3c3c;">101.0</div>
<div class="t" style="top:290.35px;font-size:8.8px;line-height:8.8px;color:#3c3c3c;left:318.55px;width:300px;text-align:center;transform:scaleX(0.8);transform-origin:50% 50%;-webkit-text-stroke:0.12px #3c3c3c;">75.0</div>
<div class="t" style="top:290.35px;font-size:8.8px;line-height:8.8px;color:#3c3c3c;left:367.65px;width:300px;text-align:center;transform:scaleX(0.8);transform-origin:50% 50%;-webkit-text-stroke:0.12px #3c3c3c;">120.0</div>
<div class="t" style="top:290.35px;font-size:8.8px;line-height:8.8px;color:#3c3c3c;left:416.75px;width:300px;text-align:center;transform:scaleX(0.8);transform-origin:50% 50%;-webkit-text-stroke:0.12px #3c3c3c;">78.0</div>
<div class="t" style="top:290.35px;font-size:8.8px;line-height:8.8px;color:#3c3c3c;left:465.85px;width:300px;text-align:center;transform:scaleX(0.8);transform-origin:50% 50%;-webkit-text-stroke:0.12px #3c3c3c;">82.0</div>
<div class="t" style="top:290.35px;font-size:8.8px;line-height:8.8px;color:#3c3c3c;left:514.95px;width:300px;text-align:center;transform:scaleX(0.8);transform-origin:50% 50%;-webkit-text-stroke:0.12px #3c3c3c;">101.0</div>
<div class="t" style="top:290.35px;font-size:8.8px;line-height:8.8px;color:#3c3c3c;left:564.05px;width:300px;text-align:center;transform:scaleX(0.8);transform-origin:50% 50%;-webkit-text-stroke:0.12px #3c3c3c;">75.0</div>
<div class="t" style="top:290.35px;font-size:8.8px;line-height:8.8px;color:#3c3c3c;left:613.15px;width:300px;text-align:center;transform:scaleX(0.8);transform-origin:50% 50%;-webkit-text-stroke:0.12px #3c3c3c;">84.0</div>
<div class="t" style="top:290.35px;font-size:8.8px;line-height:8.8px;color:#3c3c3c;left:662.25px;width:300px;text-align:center;transform:scaleX(0.8);transform-origin:50% 50%;-webkit-text-stroke:0.12px #3c3c3c;">92.0</div>
<div class="t" style="top:290.35px;font-size:8.8px;line-height:8.8px;color:#3c3c3c;left:711.35px;width:300px;text-align:center;transform:scaleX(0.8);transform-origin:50% 50%;-webkit-text-stroke:0.12px #3c3c3c;">80.0</div>
<div class="t" style="top:290.35px;font-size:8.8px;line-height:8.8px;color:#3c3c3c;left:760.45px;width:300px;text-align:center;transform:scaleX(0.8);transform-origin:50% 50%;-webkit-text-stroke:0.12px #3c3c3c;">77.0</div>
<div class="t" style="top:290.35px;font-size:8.8px;line-height:8.8px;color:#3c3c3c;left:809.55px;width:300px;text-align:center;transform:scaleX(0.8);transform-origin:50% 50%;-webkit-text-stroke:0.12px #3c3c3c;">116.0</div>
<div class="t" style="top:290.35px;font-size:8.8px;line-height:8.8px;color:#3c3c3c;left:858.65px;width:300px;text-align:center;transform:scaleX(0.8);transform-origin:50% 50%;-webkit-text-stroke:0.12px #3c3c3c;">123.0</div>
<div class="t" style="top:304.76px;font-size:7.9px;line-height:7.9px;color:#3c3c3c;left:-94.30px;width:300px;text-align:center;transform:scaleX(0.95);transform-origin:50% 50%;-webkit-text-stroke:0.12px #3c3c3c;">Risk Assessment</div>
<div class="t" style="top:304.76px;font-size:7.9px;line-height:7.9px;color:#3c3c3c;left:37.57px;width:300px;text-align:center;transform:scaleX(0.95);transform-origin:50% 50%;-webkit-text-stroke:0.12px #3c3c3c;">Risk Reduction Rate</div>
<div class="t" style="top:304.76px;font-size:7.9px;line-height:7.9px;color:#3c3c3c;left:155.12px;width:300px;text-align:center;transform:scaleX(0.95);transform-origin:50% 50%;-webkit-text-stroke:0.12px #3c3c3c;">(%)</div>
<div class="t" style="top:304.00px;font-size:8.8px;line-height:8.8px;color:#3c3c3c;left:220.35px;width:300px;text-align:center;transform:scaleX(0.8);transform-origin:50% 50%;-webkit-text-stroke:0.12px #3c3c3c;">120.0</div>
<div class="t" style="top:304.00px;font-size:8.8px;line-height:8.8px;color:#3c3c3c;left:269.45px;width:300px;text-align:center;transform:scaleX(0.8);transform-origin:50% 50%;-webkit-text-stroke:0.12px #3c3c3c;">117.0</div>
<div class="t" style="top:304.00px;font-size:8.8px;line-height:8.8px;color:#3c3c3c;left:318.55px;width:300px;text-align:center;transform:scaleX(0.8);transform-origin:50% 50%;-webkit-text-stroke:0.12px #3c3c3c;">80.0</div>
<div class="t" style="top:304.00px;font-size:8.8px;line-height:8.8px;color:#3c3c3c;left:367.65px;width:300px;text-align:center;transform:scaleX(0.8);transform-origin:50% 50%;-webkit-text-stroke:0.12px #3c3c3c;">103.0</div>
<div class="t" style="top:304.00px;font-size:8.8px;line-height:8.8px;color:#3c3c3c;left:416.75px;width:300px;text-align:center;transform:scaleX(0.8);transform-origin:50% 50%;-webkit-text-stroke:0.12px #3c3c3c;">89.0</div>
<div class="t" style="top:304.00px;font-size:8.8px;line-height:8.8px;color:#3c3c3c;left:465.85px;width:300px;text-align:center;transform:scaleX(0.8);transform-origin:50% 50%;-webkit-text-stroke:0.12px #3c3c3c;">97.0</div>
<div class="t" style="top:304.00px;font-size:8.8px;line-height:8.8px;color:#3c3c3c;left:514.95px;width:300px;text-align:center;transform:scaleX(0.8);transform-origin:50% 50%;-webkit-text-stroke:0.12px #3c3c3c;">97.0</div>
<div class="t" style="top:304.00px;font-size:8.8px;line-height:8.8px;color:#3c3c3c;left:564.05px;width:300px;text-align:center;transform:scaleX(0.8);transform-origin:50% 50%;-webkit-text-stroke:0.12px #3c3c3c;">123.0</div>
<div class="t" style="top:304.00px;font-size:8.8px;line-height:8.8px;color:#3c3c3c;left:613.15px;width:300px;text-align:center;transform:scaleX(0.8);transform-origin:50% 50%;-webkit-text-stroke:0.12px #3c3c3c;">114.0</div>
<div class="t" style="top:304.00px;font-size:8.8px;line-height:8.8px;color:#3c3c3c;left:662.25px;width:300px;text-align:center;transform:scaleX(0.8);transform-origin:50% 50%;-webkit-text-stroke:0.12px #3c3c3c;">119.0</div>
<div class="t" style="top:304.00px;font-size:8.8px;line-height:8.8px;color:#3c3c3c;left:711.35px;width:300px;text-align:center;transform:scaleX(0.8);transform-origin:50% 50%;-webkit-text-stroke:0.12px #3c3c3c;">89.0</div>
<div class="t" style="top:304.00px;font-size:8.8px;line-height:8.8px;color:#3c3c3c;left:760.45px;width:300px;text-align:center;transform:scaleX(0.8);transform-origin:50% 50%;-webkit-text-stroke:0.12px #3c3c3c;">73.0</div>
<div class="t" style="top:304.00px;font-size:8.8px;line-height:8.8px;color:#3c3c3c;left:809.55px;width:300px;text-align:center;transform:scaleX(0.8);transform-origin:50% 50%;-webkit-text-stroke:0.12px #3c3c3c;">83.0</div>
<div class="t" style="top:304.00px;font-size:8.8px;line-height:8.8px;color:#3c3c3c;left:858.65px;width:300px;text-align:center;transform:scaleX(0.8);transform-origin:50% 50%;-webkit-text-stroke:0.12px #3c3c3c;">78.0</div>
<div class="t" style="top:318.41px;font-size:7.9px;line-height:7.9px;color:#3c3c3c;left:-94.30px;width:300px;text-align:center;transform:scaleX(0.95);transform-origin:50% 50%;-webkit-text-stroke:0.12px #3c3c3c;">User Awareness</div>
<div class="t" style="top:318.41px;font-size:7.9px;line-height:7.9px;color:#3c3c3c;left:37.57px;width:300px;text-align:center;transform:scaleX(0.95);transform-origin:50% 50%;-webkit-text-stroke:0.12px #3c3c3c;">Phishing Simulation Success Rate</div>
<div class="t" style="top:318.41px;font-size:7.9px;line-height:7.9px;color:#3c3c3c;left:155.12px;width:300px;text-align:center;transform:scaleX(0.95);transform-origin:50% 50%;-webkit-text-stroke:0.12px #3c3c3c;">(%)</div>
<div class="t" style="top:317.65px;font-size:8.8px;line-height:8.8px;color:#3c3c3c;left:220.35px;width:300px;text-align:center;transform:scaleX(0.8);transform-origin:50% 50%;-webkit-text-stroke:0.12px #3c3c3c;">111.0</div>
<div class="t" style="top:317.65px;font-size:8.8px;line-height:8.8px;color:#3c3c3c;left:269.45px;width:300px;text-align:center;transform:scaleX(0.8);transform-origin:50% 50%;-webkit-text-stroke:0.12px #3c3c3c;">91.0</div>
<div class="t" style="top:317.65px;font-size:8.8px;line-height:8.8px;color:#3c3c3c;left:318.55px;width:300px;text-align:center;transform:scaleX(0.8);transform-origin:50% 50%;-webkit-text-stroke:0.12px #3c3c3c;">87.0</div>
<div class="t" style="top:317.65px;font-size:8.8px;line-height:8.8px;color:#3c3c3c;left:367.65px;width:300px;text-align:center;transform:scaleX(0.8);transform-origin:50% 50%;-webkit-text-stroke:0.12px #3c3c3c;">99.0</div>
<div class="t" style="top:317.65px;font-size:8.8px;line-height:8.8px;color:#3c3c3c;left:416.75px;width:300px;text-align:center;transform:scaleX(0.8);transform-origin:50% 50%;-webkit-text-stroke:0.12px #3c3c3c;">76.0</div>
<div class="t" style="top:317.65px;font-size:8.8px;line-height:8.8px;color:#3c3c3c;left:465.85px;width:300px;text-align:center;transform:scaleX(0.8);transform-origin:50% 50%;-webkit-text-stroke:0.12px #3c3c3c;">122.0</div>
<div class="t" style="top:317.65px;font-size:8.8px;line-height:8.8px;color:#3c3c3c;left:514.95px;width:300px;text-align:center;transform:scaleX(0.8);transform-origin:50% 50%;-webkit-text-stroke:0.12px #3c3c3c;">100.0</div>
<div class="t" style="top:317.65px;font-size:8.8px;line-height:8.8px;color:#3c3c3c;left:564.05px;width:300px;text-align:center;transform:scaleX(0.8);transform-origin:50% 50%;-webkit-text-stroke:0.12px #3c3c3c;">119.0</div>
<div class="t" style="top:317.65px;font-size:8.8px;line-height:8.8px;color:#3c3c3c;left:613.15px;width:300px;text-align:center;transform:scaleX(0.8);transform-origin:50% 50%;-webkit-text-stroke:0.12px #3c3c3c;">71.0</div>
<div class="t" style="top:317.65px;font-size:8.8px;line-height:8.8px;color:#3c3c3c;left:662.25px;width:300px;text-align:center;transform:scaleX(0.8);transform-origin:50% 50%;-webkit-text-stroke:0.12px #3c3c3c;">70.0</div>
<div class="t" style="top:317.65px;font-size:8.8px;line-height:8.8px;color:#3c3c3c;left:711.35px;width:300px;text-align:center;transform:scaleX(0.8);transform-origin:50% 50%;-webkit-text-stroke:0.12px #3c3c3c;">75.0</div>
<div class="t" style="top:317.65px;font-size:8.8px;line-height:8.8px;color:#3c3c3c;left:760.45px;width:300px;text-align:center;transform:scaleX(0.8);transform-origin:50% 50%;-webkit-text-stroke:0.12px #3c3c3c;">110.0</div>
<div class="t" style="top:317.65px;font-size:8.8px;line-height:8.8px;color:#3c3c3c;left:809.55px;width:300px;text-align:center;transform:scaleX(0.8);transform-origin:50% 50%;-webkit-text-stroke:0.12px #3c3c3c;">102.0</div>
<div class="t" style="top:317.65px;font-size:8.8px;line-height:8.8px;color:#3c3c3c;left:858.65px;width:300px;text-align:center;transform:scaleX(0.8);transform-origin:50% 50%;-webkit-text-stroke:0.12px #3c3c3c;">111.0</div>
<div class="t" style="top:332.06px;font-size:7.9px;line-height:7.9px;color:#3c3c3c;left:-94.30px;width:300px;text-align:center;transform:scaleX(0.95);transform-origin:50% 50%;-webkit-text-stroke:0.12px #3c3c3c;">User Awareness</div>
<div class="t" style="top:332.06px;font-size:7.9px;line-height:7.9px;color:#3c3c3c;left:37.57px;width:300px;text-align:center;transform:scaleX(0.95);transform-origin:50% 50%;-webkit-text-stroke:0.12px #3c3c3c;">Training Completion Rate</div>
<div class="t" style="top:332.06px;font-size:7.9px;line-height:7.9px;color:#3c3c3c;left:155.12px;width:300px;text-align:center;transform:scaleX(0.95);transform-origin:50% 50%;-webkit-text-stroke:0.12px #3c3c3c;">(%)</div>
<div class="t" style="top:331.30px;font-size:8.8px;line-height:8.8px;color:#3c3c3c;left:220.35px;width:300px;text-align:center;transform:scaleX(0.8);transform-origin:50% 50%;-webkit-text-stroke:0.12px #3c3c3c;">106.9</div>
<div class="t" style="top:331.30px;font-size:8.8px;line-height:8.8px;color:#3c3c3c;left:269.45px;width:300px;text-align:center;transform:scaleX(0.8);transform-origin:50% 50%;-webkit-text-stroke:0.12px #3c3c3c;">107.4</div>
<div class="t" style="top:331.30px;font-size:8.8px;line-height:8.8px;color:#3c3c3c;left:318.55px;width:300px;text-align:center;transform:scaleX(0.8);transform-origin:50% 50%;-webkit-text-stroke:0.12px #3c3c3c;">74.1</div>
<div class="t" style="top:331.30px;font-size:8.8px;line-height:8.8px;color:#3c3c3c;left:367.65px;width:300px;text-align:center;transform:scaleX(0.8);transform-origin:50% 50%;-webkit-text-stroke:0.12px #3c3c3c;">101.0</div>
<div class="t" style="top:331.30px;font-size:8.8px;line-height:8.8px;color:#3c3c3c;left:416.75px;width:300px;text-align:center;transform:scaleX(0.8);transform-origin:50% 50%;-webkit-text-stroke:0.12px #3c3c3c;">86.4</div>
<div class="t" style="top:331.30px;font-size:8.8px;line-height:8.8px;color:#3c3c3c;left:465.85px;width:300px;text-align:center;transform:scaleX(0.8);transform-origin:50% 50%;-webkit-text-stroke:0.12px #3c3c3c;">109.1</div>
<div class="t" style="top:331.30px;font-size:8.8px;line-height:8.8px;color:#3c3c3c;left:514.95px;width:300px;text-align:center;transform:scaleX(0.8);transform-origin:50% 50%;-webkit-text-stroke:0.12px #3c3c3c;">104.5</div>
<div class="t" style="top:331.30px;font-size:8.8px;line-height:8.8px;color:#3c3c3c;left:564.05px;width:300px;text-align:center;transform:scaleX(0.8);transform-origin:50% 50%;-webkit-text-stroke:0.12px #3c3c3c;">124.7</div>
<div class="t" style="top:331.30px;font-size:8.8px;line-height:8.8px;color:#3c3c3c;left:613.15px;width:300px;text-align:center;transform:scaleX(0.8);transform-origin:50% 50%;-webkit-text-stroke:0.12px #3c3c3c;">85.1</div>
<div class="t" style="top:331.30px;font-size:8.8px;line-height:8.8px;color:#3c3c3c;left:662.25px;width:300px;text-align:center;transform:scaleX(0.8);transform-origin:50% 50%;-webkit-text-stroke:0.12px #3c3c3c;">91.5</div>
<div class="t" style="top:331.30px;font-size:8.8px;line-height:8.8px;color:#3c3c3c;left:711.35px;width:300px;text-align:center;transform:scaleX(0.8);transform-origin:50% 50%;-webkit-text-stroke:0.12px #3c3c3c;">86.4</div>
<div class="t" style="top:331.30px;font-size:8.8px;line-height:8.8px;color:#3c3c3c;left:760.45px;width:300px;text-align:center;transform:scaleX(0.8);transform-origin:50% 50%;-webkit-text-stroke:0.12px #3c3c3c;">89.1</div>
<div class="t" style="top:331.30px;font-size:8.8px;line-height:8.8px;color:#3c3c3c;left:809.55px;width:300px;text-align:center;transform:scaleX(0.8);transform-origin:50% 50%;-webkit-text-stroke:0.12px #3c3c3c;">97.5</div>
<div class="t" style="top:331.30px;font-size:8.8px;line-height:8.8px;color:#3c3c3c;left:858.65px;width:300px;text-align:center;transform:scaleX(0.8);transform-origin:50% 50%;-webkit-text-stroke:0.12px #3c3c3c;">101.9</div>
<div class="t" style="top:345.71px;font-size:7.9px;line-height:7.9px;color:#3c3c3c;left:-94.30px;width:300px;text-align:center;transform:scaleX(0.95);transform-origin:50% 50%;-webkit-text-stroke:0.12px #3c3c3c;">System Security</div>
<div class="t" style="top:345.71px;font-size:7.9px;line-height:7.9px;color:#3c3c3c;left:37.57px;width:300px;text-align:center;transform:scaleX(0.95);transform-origin:50% 50%;-webkit-text-stroke:0.12px #3c3c3c;">Endpoint Protection Coverage</div>
<div class="t" style="top:345.71px;font-size:7.9px;line-height:7.9px;color:#3c3c3c;left:155.12px;width:300px;text-align:center;transform:scaleX(0.95);transform-origin:50% 50%;-webkit-text-stroke:0.12px #3c3c3c;">(%)</div>
<div class="t" style="top:344.95px;font-size:8.8px;line-height:8.8px;color:#3c3c3c;left:220.35px;width:300px;text-align:center;transform:scaleX(0.8);transform-origin:50% 50%;-webkit-text-stroke:0.12px #3c3c3c;">99.5</div>
<div class="t" style="top:344.95px;font-size:8.8px;line-height:8.8px;color:#3c3c3c;left:269.45px;width:300px;text-align:center;transform:scaleX(0.8);transform-origin:50% 50%;-webkit-text-stroke:0.12px #3c3c3c;">95.6</div>
<div class="t" style="top:344.95px;font-size:8.8px;line-height:8.8px;color:#3c3c3c;left:318.55px;width:300px;text-align:center;transform:scaleX(0.8);transform-origin:50% 50%;-webkit-text-stroke:0.12px #3c3c3c;">74.4</div>
<div class="t" style="top:344.95px;font-size:8.8px;line-height:8.8px;color:#3c3c3c;left:367.65px;width:300px;text-align:center;transform:scaleX(0.8);transform-origin:50% 50%;-webkit-text-stroke:0.12px #3c3c3c;">99.0</div>
<div class="t" style="top:344.95px;font-size:8.8px;line-height:8.8px;color:#3c3c3c;left:416.75px;width:300px;text-align:center;transform:scaleX(0.8);transform-origin:50% 50%;-webkit-text-stroke:0.12px #3c3c3c;">81.3</div>
<div class="t" style="top:344.95px;font-size:8.8px;line-height:8.8px;color:#3c3c3c;left:465.85px;width:300px;text-align:center;transform:scaleX(0.8);transform-origin:50% 50%;-webkit-text-stroke:0.12px #3c3c3c;">121.4</div>
<div class="t" style="top:344.95px;font-size:8.8px;line-height:8.8px;color:#3c3c3c;left:514.95px;width:300px;text-align:center;transform:scaleX(0.8);transform-origin:50% 50%;-webkit-text-stroke:0.12px #3c3c3c;">108.0</div>
<div class="t" style="top:344.95px;font-size:8.8px;line-height:8.8px;color:#3c3c3c;left:564.05px;width:300px;text-align:center;transform:scaleX(0.8);transform-origin:50% 50%;-webkit-text-stroke:0.12px #3c3c3c;">123.9</div>
<div class="t" style="top:344.95px;font-size:8.8px;line-height:8.8px;color:#3c3c3c;left:613.15px;width:300px;text-align:center;transform:scaleX(0.8);transform-origin:50% 50%;-webkit-text-stroke:0.12px #3c3c3c;">61.2</div>
<div class="t" style="top:344.95px;font-size:8.8px;line-height:8.8px;color:#3c3c3c;left:662.25px;width:300px;text-align:center;transform:scaleX(0.8);transform-origin:50% 50%;-webkit-text-stroke:0.12px #3c3c3c;">66.0</div>
<div class="t" style="top:344.95px;font-size:8.8px;line-height:8.8px;color:#3c3c3c;left:711.35px;width:300px;text-align:center;transform:scaleX(0.8);transform-origin:50% 50%;-webkit-text-stroke:0.12px #3c3c3c;">80.9</div>
<div class="t" style="top:344.95px;font-size:8.8px;line-height:8.8px;color:#3c3c3c;left:760.45px;width:300px;text-align:center;transform:scaleX(0.8);transform-origin:50% 50%;-webkit-text-stroke:0.12px #3c3c3c;">106.9</div>
<div class="t" style="top:344.95px;font-size:8.8px;line-height:8.8px;color:#3c3c3c;left:809.55px;width:300px;text-align:center;transform:scaleX(0.8);transform-origin:50% 50%;-webkit-text-stroke:0.12px #3c3c3c;">108.7</div>
<div class="t" style="top:344.95px;font-size:8.8px;line-height:8.8px;color:#3c3c3c;left:858.65px;width:300px;text-align:center;transform:scaleX(0.8);transform-origin:50% 50%;-webkit-text-stroke:0.12px #3c3c3c;">120.9</div>
<div class="t" style="top:359.36px;font-size:7.9px;line-height:7.9px;color:#3c3c3c;left:-94.30px;width:300px;text-align:center;transform:scaleX(0.95);transform-origin:50% 50%;-webkit-text-stroke:0.12px #3c3c3c;">System Security</div>
<div class="t" style="top:359.36px;font-size:7.9px;line-height:7.9px;color:#3c3c3c;left:37.57px;width:300px;text-align:center;transform:scaleX(0.95);transform-origin:50% 50%;-webkit-text-stroke:0.12px #3c3c3c;">Firewall Rule Violation Rate</div>
<div class="t" style="top:359.36px;font-size:7.9px;line-height:7.9px;color:#3c3c3c;left:155.12px;width:300px;text-align:center;transform:scaleX(0.95);transform-origin:50% 50%;-webkit-text-stroke:0.12px #3c3c3c;">Count</div>
<div class="t" style="top:358.60px;font-size:8.8px;line-height:8.8px;color:#3c3c3c;left:220.35px;width:300px;text-align:center;transform:scaleX(0.8);transform-origin:50% 50%;-webkit-text-stroke:0.12px #3c3c3c;">92.9</div>
<div class="t" style="top:358.60px;font-size:8.8px;line-height:8.8px;color:#3c3c3c;left:269.45px;width:300px;text-align:center;transform:scaleX(0.8);transform-origin:50% 50%;-webkit-text-stroke:0.12px #3c3c3c;">90.8</div>
<div class="t" style="top:358.60px;font-size:8.8px;line-height:8.8px;color:#3c3c3c;left:318.55px;width:300px;text-align:center;transform:scaleX(0.8);transform-origin:50% 50%;-webkit-text-stroke:0.12px #3c3c3c;">71.4</div>
<div class="t" style="top:358.60px;font-size:8.8px;line-height:8.8px;color:#3c3c3c;left:367.65px;width:300px;text-align:center;transform:scaleX(0.8);transform-origin:50% 50%;-webkit-text-stroke:0.12px #3c3c3c;">97.9</div>
<div class="t" style="top:358.60px;font-size:8.8px;line-height:8.8px;color:#3c3c3c;left:416.75px;width:300px;text-align:center;transform:scaleX(0.8);transform-origin:50% 50%;-webkit-text-stroke:0.12px #3c3c3c;">80.0</div>
<div class="t" style="top:358.60px;font-size:8.8px;line-height:8.8px;color:#3c3c3c;left:465.85px;width:300px;text-align:center;transform:scaleX(0.8);transform-origin:50% 50%;-webkit-text-stroke:0.12px #3c3c3c;">127.4</div>
<div class="t" style="top:358.60px;font-size:8.8px;line-height:8.8px;color:#3c3c3c;left:514.95px;width:300px;text-align:center;transform:scaleX(0.8);transform-origin:50% 50%;-webkit-text-stroke:0.12px #3c3c3c;">111.8</div>
<div class="t" style="top:358.60px;font-size:8.8px;line-height:8.8px;color:#3c3c3c;left:564.05px;width:300px;text-align:center;transform:scaleX(0.8);transform-origin:50% 50%;-webkit-text-stroke:0.12px #3c3c3c;">124.7</div>
<div class="t" style="top:358.60px;font-size:8.8px;line-height:8.8px;color:#3c3c3c;left:613.15px;width:300px;text-align:center;transform:scaleX(0.8);transform-origin:50% 50%;-webkit-text-stroke:0.12px #3c3c3c;">46.8</div>
<div class="t" style="top:358.60px;font-size:8.8px;line-height:8.8px;color:#3c3c3c;left:662.25px;width:300px;text-align:center;transform:scaleX(0.8);transform-origin:50% 50%;-webkit-text-stroke:0.12px #3c3c3c;">52.3</div>
<div class="t" style="top:358.60px;font-size:8.8px;line-height:8.8px;color:#3c3c3c;left:711.35px;width:300px;text-align:center;transform:scaleX(0.8);transform-origin:50% 50%;-webkit-text-stroke:0.12px #3c3c3c;">79.6</div>
<div class="t" style="top:358.60px;font-size:8.8px;line-height:8.8px;color:#3c3c3c;left:760.45px;width:300px;text-align:center;transform:scaleX(0.8);transform-origin:50% 50%;-webkit-text-stroke:0.12px #3c3c3c;">114.9</div>
<div class="t" style="top:358.60px;font-size:8.8px;line-height:8.8px;color:#3c3c3c;left:809.55px;width:300px;text-align:center;transform:scaleX(0.8);transform-origin:50% 50%;-webkit-text-stroke:0.12px #3c3c3c;">115.9</div>
<div class="t" style="top:358.60px;font-size:8.8px;line-height:8.8px;color:#3c3c3c;left:858.65px;width:300px;text-align:center;transform:scaleX(0.8);transform-origin:50% 50%;-webkit-text-stroke:0.12px #3c3c3c;">132.8</div>
<div class="t" style="top:373.01px;font-size:7.9px;line-height:7.9px;color:#3c3c3c;left:-94.30px;width:300px;text-align:center;transform:scaleX(0.95);transform-origin:50% 50%;-webkit-text-stroke:0.12px #3c3c3c;">Data Security</div>
<div class="t" style="top:373.01px;font-size:7.9px;line-height:7.9px;color:#3c3c3c;left:37.57px;width:300px;text-align:center;transform:scaleX(0.95);transform-origin:50% 50%;-webkit-text-stroke:0.12px #3c3c3c;">Data Breaches Detected</div>
<div class="t" style="top:373.01px;font-size:7.9px;line-height:7.9px;color:#3c3c3c;left:155.12px;width:300px;text-align:center;transform:scaleX(0.95);transform-origin:50% 50%;-webkit-text-stroke:0.12px #3c3c3c;">Count</div>
<div class="t" style="top:372.25px;font-size:8.8px;line-height:8.8px;color:#3c3c3c;left:220.35px;width:300px;text-align:center;transform:scaleX(0.8);transform-origin:50% 50%;-webkit-text-stroke:0.12px #3c3c3c;">86.3</div>
<div class="t" style="top:372.25px;font-size:8.8px;line-height:8.8px;color:#3c3c3c;left:269.45px;width:300px;text-align:center;transform:scaleX(0.8);transform-origin:50% 50%;-webkit-text-stroke:0.12px #3c3c3c;">86.0</div>
<div class="t" style="top:372.25px;font-size:8.8px;line-height:8.8px;color:#3c3c3c;left:318.55px;width:300px;text-align:center;transform:scaleX(0.8);transform-origin:50% 50%;-webkit-text-stroke:0.12px #3c3c3c;">68.5</div>
<div class="t" style="top:372.25px;font-size:8.8px;line-height:8.8px;color:#3c3c3c;left:367.65px;width:300px;text-align:center;transform:scaleX(0.8);transform-origin:50% 50%;-webkit-text-stroke:0.12px #3c3c3c;">96.9</div>
<div class="t" style="top:372.25px;font-size:8.8px;line-height:8.8px;color:#3c3c3c;left:416.75px;width:300px;text-align:center;transform:scaleX(0.8);transform-origin:50% 50%;-webkit-text-stroke:0.12px #3c3c3c;">78.7</div>
<div class="t" style="top:372.25px;font-size:8.8px;line-height:8.8px;color:#3c3c3c;left:465.85px;width:300px;text-align:center;transform:scaleX(0.8);transform-origin:50% 50%;-webkit-text-stroke:0.12px #3c3c3c;">133.5</div>
<div class="t" style="top:372.25px;font-size:8.8px;line-height:8.8px;color:#3c3c3c;left:514.95px;width:300px;text-align:center;transform:scaleX(0.8);transform-origin:50% 50%;-webkit-text-stroke:0.12px #3c3c3c;">115.5</div>
<div class="t" style="top:372.25px;font-size:8.8px;line-height:8.8px;color:#3c3c3c;left:564.05px;width:300px;text-align:center;transform:scaleX(0.8);transform-origin:50% 50%;-webkit-text-stroke:0.12px #3c3c3c;">125.6</div>
<div class="t" style="top:372.25px;font-size:8.8px;line-height:8.8px;color:#3c3c3c;left:613.15px;width:300px;text-align:center;transform:scaleX(0.8);transform-origin:50% 50%;-webkit-text-stroke:0.12px #3c3c3c;">32.3</div>
<div class="t" style="top:372.25px;font-size:8.8px;line-height:8.8px;color:#3c3c3c;left:662.25px;width:300px;text-align:center;transform:scaleX(0.8);transform-origin:50% 50%;-webkit-text-stroke:0.12px #3c3c3c;">38.5</div>
<div class="t" style="top:372.25px;font-size:8.8px;line-height:8.8px;color:#3c3c3c;left:711.35px;width:300px;text-align:center;transform:scaleX(0.8);transform-origin:50% 50%;-webkit-text-stroke:0.12px #3c3c3c;">78.4</div>
<div class="t" style="top:372.25px;font-size:8.8px;line-height:8.8px;color:#3c3c3c;left:760.45px;width:300px;text-align:center;transform:scaleX(0.8);transform-origin:50% 50%;-webkit-text-stroke:0.12px #3c3c3c;">123.0</div>
<div class="t" style="top:372.25px;font-size:8.8px;line-height:8.8px;color:#3c3c3c;left:809.55px;width:300px;text-align:center;transform:scaleX(0.8);transform-origin:50% 50%;-webkit-text-stroke:0.12px #3c3c3c;">123.2</div>
<div class="t" style="top:372.25px;font-size:8.8px;line-height:8.8px;color:#3c3c3c;left:858.65px;width:300px;text-align:center;transform:scaleX(0.8);transform-origin:50% 50%;-webkit-text-stroke:0.12px #3c3c3c;">144.8</div>
<div class="t" style="top:386.66px;font-size:7.9px;line-height:7.9px;color:#3c3c3c;left:-94.30px;width:300px;text-align:center;transform:scaleX(0.95);transform-origin:50% 50%;-webkit-text-stroke:0.12px #3c3c3c;">Data Security</div>
<div class="t" style="top:386.66px;font-size:7.9px;line-height:7.9px;color:#3c3c3c;left:37.57px;width:300px;text-align:center;transform:scaleX(0.95);transform-origin:50% 50%;-webkit-text-stroke:0.12px #3c3c3c;">Data Loss Prevention (DLP) Alerts</div>
<div class="t" style="top:386.66px;font-size:7.9px;line-height:7.9px;color:#3c3c3c;left:155.12px;width:300px;text-align:center;transform:scaleX(0.95);transform-origin:50% 50%;-webkit-text-stroke:0.12px #3c3c3c;">Count</div>
<div class="t" style="top:385.90px;font-size:8.8px;line-height:8.8px;color:#3c3c3c;left:220.35px;width:300px;text-align:center;transform:scaleX(0.8);transform-origin:50% 50%;-webkit-text-stroke:0.12px #3c3c3c;">79.8</div>
<div class="t" style="top:385.90px;font-size:8.8px;line-height:8.8px;color:#3c3c3c;left:269.45px;width:300px;text-align:center;transform:scaleX(0.8);transform-origin:50% 50%;-webkit-text-stroke:0.12px #3c3c3c;">81.3</div>
<div class="t" style="top:385.90px;font-size:8.8px;line-height:8.8px;color:#3c3c3c;left:318.55px;width:300px;text-align:center;transform:scaleX(0.8);transform-origin:50% 50%;-webkit-text-stroke:0.12px #3c3c3c;">65.5</div>
<div class="t" style="top:385.90px;font-size:8.8px;line-height:8.8px;color:#3c3c3c;left:367.65px;width:300px;text-align:center;transform:scaleX(0.8);transform-origin:50% 50%;-webkit-text-stroke:0.12px #3c3c3c;">95.9</div>
<div class="t" style="top:385.90px;font-size:8.8px;line-height:8.8px;color:#3c3c3c;left:416.75px;width:300px;text-align:center;transform:scaleX(0.8);transform-origin:50% 50%;-webkit-text-stroke:0.12px #3c3c3c;">77.4</div>
<div class="t" style="top:385.90px;font-size:8.8px;line-height:8.8px;color:#3c3c3c;left:465.85px;width:300px;text-align:center;transform:scaleX(0.8);transform-origin:50% 50%;-webkit-text-stroke:0.12px #3c3c3c;">139.5</div>
<div class="t" style="top:385.90px;font-size:8.8px;line-height:8.8px;color:#3c3c3c;left:514.95px;width:300px;text-align:center;transform:scaleX(0.8);transform-origin:50% 50%;-webkit-text-stroke:0.12px #3c3c3c;">119.3</div>
<div class="t" style="top:385.90px;font-size:8.8px;line-height:8.8px;color:#3c3c3c;left:564.05px;width:300px;text-align:center;transform:scaleX(0.8);transform-origin:50% 50%;-webkit-text-stroke:0.12px #3c3c3c;">126.4</div>
<div class="t" style="top:385.90px;font-size:8.8px;line-height:8.8px;color:#3c3c3c;left:613.15px;width:300px;text-align:center;transform:scaleX(0.8);transform-origin:50% 50%;-webkit-text-stroke:0.12px #3c3c3c;">17.9</div>
<div class="t" style="top:385.90px;font-size:8.8px;line-height:8.8px;color:#3c3c3c;left:662.25px;width:300px;text-align:center;transform:scaleX(0.8);transform-origin:50% 50%;-webkit-text-stroke:0.12px #3c3c3c;">24.8</div>
<div class="t" style="top:385.90px;font-size:8.8px;line-height:8.8px;color:#3c3c3c;left:711.35px;width:300px;text-align:center;transform:scaleX(0.8);transform-origin:50% 50%;-webkit-text-stroke:0.12px #3c3c3c;">77.1</div>
<div class="t" style="top:385.90px;font-size:8.8px;line-height:8.8px;color:#3c3c3c;left:760.45px;width:300px;text-align:center;transform:scaleX(0.8);transform-origin:50% 50%;-webkit-text-stroke:0.12px #3c3c3c;">131.1</div>
<div class="t" style="top:385.90px;font-size:8.8px;line-height:8.8px;color:#3c3c3c;left:809.55px;width:300px;text-align:center;transform:scaleX(0.8);transform-origin:50% 50%;-webkit-text-stroke:0.12px #3c3c3c;">130.4</div>
<div class="t" style="top:385.90px;font-size:8.8px;line-height:8.8px;color:#3c3c3c;left:858.65px;width:300px;text-align:center;transform:scaleX(0.8);transform-origin:50% 50%;-webkit-text-stroke:0.12px #3c3c3c;">156.8</div>
<div class="t" style="top:400.31px;font-size:7.9px;line-height:7.9px;color:#3c3c3c;left:-94.30px;width:300px;text-align:center;transform:scaleX(0.95);transform-origin:50% 50%;-webkit-text-stroke:0.12px #3c3c3c;">Compliance</div>
<div class="t" style="top:400.31px;font-size:7.9px;line-height:7.9px;color:#3c3c3c;left:37.57px;width:300px;text-align:center;transform:scaleX(0.95);transform-origin:50% 50%;-webkit-text-stroke:0.12px #3c3c3c;">Compliance Audit Score</div>
<div class="t" style="top:400.31px;font-size:7.9px;line-height:7.9px;color:#3c3c3c;left:155.12px;width:300px;text-align:center;transform:scaleX(0.95);transform-origin:50% 50%;-webkit-text-stroke:0.12px #3c3c3c;">(%)</div>
<div class="t" style="top:399.55px;font-size:8.8px;line-height:8.8px;color:#3c3c3c;left:220.35px;width:300px;text-align:center;transform:scaleX(0.8);transform-origin:50% 50%;-webkit-text-stroke:0.12px #3c3c3c;">73.2</div>
<div class="t" style="top:399.55px;font-size:8.8px;line-height:8.8px;color:#3c3c3c;left:269.45px;width:300px;text-align:center;transform:scaleX(0.8);transform-origin:50% 50%;-webkit-text-stroke:0.12px #3c3c3c;">76.5</div>
<div class="t" style="top:399.55px;font-size:8.8px;line-height:8.8px;color:#3c3c3c;left:318.55px;width:300px;text-align:center;transform:scaleX(0.8);transform-origin:50% 50%;-webkit-text-stroke:0.12px #3c3c3c;">62.5</div>
<div class="t" style="top:399.55px;font-size:8.8px;line-height:8.8px;color:#3c3c3c;left:367.65px;width:300px;text-align:center;transform:scaleX(0.8);transform-origin:50% 50%;-webkit-text-stroke:0.12px #3c3c3c;">94.9</div>
<div class="t" style="top:399.55px;font-size:8.8px;line-height:8.8px;color:#3c3c3c;left:416.75px;width:300px;text-align:center;transform:scaleX(0.8);transform-origin:50% 50%;-webkit-text-stroke:0.12px #3c3c3c;">76.1</div>
<div class="t" style="top:399.55px;font-size:8.8px;line-height:8.8px;color:#3c3c3c;left:465.85px;width:300px;text-align:center;transform:scaleX(0.8);transform-origin:50% 50%;-webkit-text-stroke:0.12px #3c3c3c;">145.5</div>
<div class="t" style="top:399.55px;font-size:8.8px;line-height:8.8px;color:#3c3c3c;left:514.95px;width:300px;text-align:center;transform:scaleX(0.8);transform-origin:50% 50%;-webkit-text-stroke:0.12px #3c3c3c;">123.0</div>
<div class="t" style="top:399.55px;font-size:8.8px;line-height:8.8px;color:#3c3c3c;left:564.05px;width:300px;text-align:center;transform:scaleX(0.8);transform-origin:50% 50%;-webkit-text-stroke:0.12px #3c3c3c;">127.2</div>
<div class="t" style="top:399.55px;font-size:8.8px;line-height:8.8px;color:#3c3c3c;left:613.15px;width:300px;text-align:center;transform:scaleX(0.8);transform-origin:50% 50%;-webkit-text-stroke:0.12px #3c3c3c;">3.5</div>
<div class="t" style="top:399.55px;font-size:8.8px;line-height:8.8px;color:#3c3c3c;left:662.25px;width:300px;text-align:center;transform:scaleX(0.8);transform-origin:50% 50%;-webkit-text-stroke:0.12px #3c3c3c;">11.0</div>
<div class="t" style="top:399.55px;font-size:8.8px;line-height:8.8px;color:#3c3c3c;left:711.35px;width:300px;text-align:center;transform:scaleX(0.8);transform-origin:50% 50%;-webkit-text-stroke:0.12px #3c3c3c;">75.8</div>
<div class="t" style="top:399.55px;font-size:8.8px;line-height:8.8px;color:#3c3c3c;left:760.45px;width:300px;text-align:center;transform:scaleX(0.8);transform-origin:50% 50%;-webkit-text-stroke:0.12px #3c3c3c;">139.1</div>
<div class="t" style="top:399.55px;font-size:8.8px;line-height:8.8px;color:#3c3c3c;left:809.55px;width:300px;text-align:center;transform:scaleX(0.8);transform-origin:50% 50%;-webkit-text-stroke:0.12px #3c3c3c;">137.7</div>
<div class="t" style="top:399.55px;font-size:8.8px;line-height:8.8px;color:#3c3c3c;left:858.65px;width:300px;text-align:center;transform:scaleX(0.8);transform-origin:50% 50%;-webkit-text-stroke:0.12px #3c3c3c;">168.7</div>
<div class="t" style="top:413.96px;font-size:7.9px;line-height:7.9px;color:#3c3c3c;left:-94.30px;width:300px;text-align:center;transform:scaleX(0.95);transform-origin:50% 50%;-webkit-text-stroke:0.12px #3c3c3c;">Compliance</div>
<div class="t" style="top:413.96px;font-size:7.9px;line-height:7.9px;color:#3c3c3c;left:37.57px;width:300px;text-align:center;transform:scaleX(0.95);transform-origin:50% 50%;-webkit-text-stroke:0.12px #3c3c3c;">Non-Compliance Incidents</div>
<div class="t" style="top:413.96px;font-size:7.9px;line-height:7.9px;color:#3c3c3c;left:155.12px;width:300px;text-align:center;transform:scaleX(0.95);transform-origin:50% 50%;-webkit-text-stroke:0.12px #3c3c3c;">Count</div>
<div class="t" style="top:413.20px;font-size:8.8px;line-height:8.8px;color:#3c3c3c;left:220.35px;width:300px;text-align:center;transform:scaleX(0.8);transform-origin:50% 50%;-webkit-text-stroke:0.12px #3c3c3c;">66.6</div>
<div class="t" style="top:413.20px;font-size:8.8px;line-height:8.8px;color:#3c3c3c;left:269.45px;width:300px;text-align:center;transform:scaleX(0.8);transform-origin:50% 50%;-webkit-text-stroke:0.12px #3c3c3c;">71.7</div>
<div class="t" style="top:413.20px;font-size:8.8px;line-height:8.8px;color:#3c3c3c;left:318.55px;width:300px;text-align:center;transform:scaleX(0.8);transform-origin:50% 50%;-webkit-text-stroke:0.12px #3c3c3c;">59.5</div>
<div class="t" style="top:413.20px;font-size:8.8px;line-height:8.8px;color:#3c3c3c;left:367.65px;width:300px;text-align:center;transform:scaleX(0.8);transform-origin:50% 50%;-webkit-text-stroke:0.12px #3c3c3c;">93.9</div>
<div class="t" style="top:413.20px;font-size:8.8px;line-height:8.8px;color:#3c3c3c;left:416.75px;width:300px;text-align:center;transform:scaleX(0.8);transform-origin:50% 50%;-webkit-text-stroke:0.12px #3c3c3c;">74.9</div>
<div class="t" style="top:413.20px;font-size:8.8px;line-height:8.8px;color:#3c3c3c;left:465.85px;width:300px;text-align:center;transform:scaleX(0.8);transform-origin:50% 50%;-webkit-text-stroke:0.12px #3c3c3c;">151.5</div>
<div class="t" style="top:413.20px;font-size:8.8px;line-height:8.8px;color:#3c3c3c;left:514.95px;width:300px;text-align:center;transform:scaleX(0.8);transform-origin:50% 50%;-webkit-text-stroke:0.12px #3c3c3c;">126.8</div>
<div class="t" style="top:413.20px;font-size:8.8px;line-height:8.8px;color:#3c3c3c;left:564.05px;width:300px;text-align:center;transform:scaleX(0.8);transform-origin:50% 50%;-webkit-text-stroke:0.12px #3c3c3c;">128.1</div>
<div class="t" style="top:413.20px;font-size:8.8px;line-height:8.8px;color:#3c3c3c;left:613.15px;width:300px;text-align:center;transform:scaleX(0.8);transform-origin:50% 50%;-webkit-text-stroke:0.12px #3c3c3c;">-11.0</div>
<div class="t" style="top:413.20px;font-size:8.8px;line-height:8.8px;color:#3c3c3c;left:662.25px;width:300px;text-align:center;transform:scaleX(0.8);transform-origin:50% 50%;-webkit-text-stroke:0.12px #3c3c3c;">-2.8</div>
<div class="t" style="top:413.20px;font-size:8.8px;line-height:8.8px;color:#3c3c3c;left:711.35px;width:300px;text-align:center;transform:scaleX(0.8);transform-origin:50% 50%;-webkit-text-stroke:0.12px #3c3c3c;">74.5</div>
<div class="t" style="top:413.20px;font-size:8.8px;line-height:8.8px;color:#3c3c3c;left:760.45px;width:300px;text-align:center;transform:scaleX(0.8);transform-origin:50% 50%;-webkit-text-stroke:0.12px #3c3c3c;">147.2</div>
<div class="t" style="top:413.20px;font-size:8.8px;line-height:8.8px;color:#3c3c3c;left:809.55px;width:300px;text-align:center;transform:scaleX(0.8);transform-origin:50% 50%;-webkit-text-stroke:0.12px #3c3c3c;">144.9</div>
<div class="t" style="top:413.20px;font-size:8.8px;line-height:8.8px;color:#3c3c3c;left:858.65px;width:300px;text-align:center;transform:scaleX(0.8);transform-origin:50% 50%;-webkit-text-stroke:0.12px #3c3c3c;">180.7</div>
<div class="t" style="top:427.61px;font-size:7.9px;line-height:7.9px;color:#3c3c3c;left:-94.30px;width:300px;text-align:center;transform:scaleX(0.95);transform-origin:50% 50%;-webkit-text-stroke:0.12px #3c3c3c;">Incident Trends</div>
<div class="t" style="top:427.61px;font-size:7.9px;line-height:7.9px;color:#3c3c3c;left:37.57px;width:300px;text-align:center;transform:scaleX(0.95);transform-origin:50% 50%;-webkit-text-stroke:0.12px #3c3c3c;">Repeated Incidents</div>
<div class="t" style="top:427.61px;font-size:7.9px;line-height:7.9px;color:#3c3c3c;left:155.12px;width:300px;text-align:center;transform:scaleX(0.95);transform-origin:50% 50%;-webkit-text-stroke:0.12px #3c3c3c;">Count</div>
<div class="t" style="top:426.85px;font-size:8.8px;line-height:8.8px;color:#3c3c3c;left:220.35px;width:300px;text-align:center;transform:scaleX(0.8);transform-origin:50% 50%;-webkit-text-stroke:0.12px #3c3c3c;">60.1</div>
<div class="t" style="top:426.85px;font-size:8.8px;line-height:8.8px;color:#3c3c3c;left:269.45px;width:300px;text-align:center;transform:scaleX(0.8);transform-origin:50% 50%;-webkit-text-stroke:0.12px #3c3c3c;">66.9</div>
<div class="t" style="top:426.85px;font-size:8.8px;line-height:8.8px;color:#3c3c3c;left:318.55px;width:300px;text-align:center;transform:scaleX(0.8);transform-origin:50% 50%;-webkit-text-stroke:0.12px #3c3c3c;">56.6</div>
<div class="t" style="top:426.85px;font-size:8.8px;line-height:8.8px;color:#3c3c3c;left:367.65px;width:300px;text-align:center;transform:scaleX(0.8);transform-origin:50% 50%;-webkit-text-stroke:0.12px #3c3c3c;">92.9</div>
<div class="t" style="top:426.85px;font-size:8.8px;line-height:8.8px;color:#3c3c3c;left:416.75px;width:300px;text-align:center;transform:scaleX(0.8);transform-origin:50% 50%;-webkit-text-stroke:0.12px #3c3c3c;">73.6</div>
<div class="t" style="top:426.85px;font-size:8.8px;line-height:8.8px;color:#3c3c3c;left:465.85px;width:300px;text-align:center;transform:scaleX(0.8);transform-origin:50% 50%;-webkit-text-stroke:0.12px #3c3c3c;">157.6</div>
<div class="t" style="top:426.85px;font-size:8.8px;line-height:8.8px;color:#3c3c3c;left:514.95px;width:300px;text-align:center;transform:scaleX(0.8);transform-origin:50% 50%;-webkit-text-stroke:0.12px #3c3c3c;">130.5</div>
<div class="t" style="top:426.85px;font-size:8.8px;line-height:8.8px;color:#3c3c3c;left:564.05px;width:300px;text-align:center;transform:scaleX(0.8);transform-origin:50% 50%;-webkit-text-stroke:0.12px #3c3c3c;">128.9</div>
<div class="t" style="top:426.85px;font-size:8.8px;line-height:8.8px;color:#3c3c3c;left:613.15px;width:300px;text-align:center;transform:scaleX(0.8);transform-origin:50% 50%;-webkit-text-stroke:0.12px #3c3c3c;">-25.4</div>
<div class="t" style="top:426.85px;font-size:8.8px;line-height:8.8px;color:#3c3c3c;left:662.25px;width:300px;text-align:center;transform:scaleX(0.8);transform-origin:50% 50%;-webkit-text-stroke:0.12px #3c3c3c;">-16.5</div>
<div class="t" style="top:426.85px;font-size:8.8px;line-height:8.8px;color:#3c3c3c;left:711.35px;width:300px;text-align:center;transform:scaleX(0.8);transform-origin:50% 50%;-webkit-text-stroke:0.12px #3c3c3c;">73.3</div>
<div class="t" style="top:426.85px;font-size:8.8px;line-height:8.8px;color:#3c3c3c;left:760.45px;width:300px;text-align:center;transform:scaleX(0.8);transform-origin:50% 50%;-webkit-text-stroke:0.12px #3c3c3c;">155.3</div>
<div class="t" style="top:426.85px;font-size:8.8px;line-height:8.8px;color:#3c3c3c;left:809.55px;width:300px;text-align:center;transform:scaleX(0.8);transform-origin:50% 50%;-webkit-text-stroke:0.12px #3c3c3c;">152.2</div>
<div class="t" style="top:426.85px;font-size:8.8px;line-height:8.8px;color:#3c3c3c;left:858.65px;width:300px;text-align:center;transform:scaleX(0.8);transform-origin:50% 50%;-webkit-text-stroke:0.12px #3c3c3c;">192.6</div>
<div class="t" style="top:441.26px;font-size:7.9px;line-height:7.9px;color:#3c3c3c;left:-94.30px;width:300px;text-align:center;transform:scaleX(0.95);transform-origin:50% 50%;-webkit-text-stroke:0.12px #3c3c3c;">Incident Trends</div>
<div class="t" style="top:441.26px;font-size:7.9px;line-height:7.9px;color:#3c3c3c;left:37.57px;width:300px;text-align:center;transform:scaleX(0.95);transform-origin:50% 50%;-webkit-text-stroke:0.12px #3c3c3c;">Incident Closure Rate</div>
<div class="t" style="top:441.26px;font-size:7.9px;line-height:7.9px;color:#3c3c3c;left:155.12px;width:300px;text-align:center;transform:scaleX(0.95);transform-origin:50% 50%;-webkit-text-stroke:0.12px #3c3c3c;">(%)</div>
<div class="t" style="top:440.50px;font-size:8.8px;line-height:8.8px;color:#3c3c3c;left:220.35px;width:300px;text-align:center;transform:scaleX(0.8);transform-origin:50% 50%;-webkit-text-stroke:0.12px #3c3c3c;">53.5</div>
<div class="t" style="top:440.50px;font-size:8.8px;line-height:8.8px;color:#3c3c3c;left:269.45px;width:300px;text-align:center;transform:scaleX(0.8);transform-origin:50% 50%;-webkit-text-stroke:0.12px #3c3c3c;">62.1</div>
<div class="t" style="top:440.50px;font-size:8.8px;line-height:8.8px;color:#3c3c3c;left:318.55px;width:300px;text-align:center;transform:scaleX(0.8);transform-origin:50% 50%;-webkit-text-stroke:0.12px #3c3c3c;">53.6</div>
<div class="t" style="top:440.50px;font-size:8.8px;line-height:8.8px;color:#3c3c3c;left:367.65px;width:300px;text-align:center;transform:scaleX(0.8);transform-origin:50% 50%;-webkit-text-stroke:0.12px #3c3c3c;">91.9</div>
<div class="t" style="top:440.50px;font-size:8.8px;line-height:8.8px;color:#3c3c3c;left:416.75px;width:300px;text-align:center;transform:scaleX(0.8);transform-origin:50% 50%;-webkit-text-stroke:0.12px #3c3c3c;">72.3</div>
<div class="t" style="top:440.50px;font-size:8.8px;line-height:8.8px;color:#3c3c3c;left:465.85px;width:300px;text-align:center;transform:scaleX(0.8);transform-origin:50% 50%;-webkit-text-stroke:0.12px #3c3c3c;">163.6</div>
<div class="t" style="top:440.50px;font-size:8.8px;line-height:8.8px;color:#3c3c3c;left:514.95px;width:300px;text-align:center;transform:scaleX(0.8);transform-origin:50% 50%;-webkit-text-stroke:0.12px #3c3c3c;">134.3</div>
<div class="t" style="top:440.50px;font-size:8.8px;line-height:8.8px;color:#3c3c3c;left:564.05px;width:300px;text-align:center;transform:scaleX(0.8);transform-origin:50% 50%;-webkit-text-stroke:0.12px #3c3c3c;">129.7</div>
<div class="t" style="top:440.50px;font-size:8.8px;line-height:8.8px;color:#3c3c3c;left:613.15px;width:300px;text-align:center;transform:scaleX(0.8);transform-origin:50% 50%;-webkit-text-stroke:0.12px #3c3c3c;">-39.8</div>
<div class="t" style="top:440.50px;font-size:8.8px;line-height:8.8px;color:#3c3c3c;left:662.25px;width:300px;text-align:center;transform:scaleX(0.8);transform-origin:50% 50%;-webkit-text-stroke:0.12px #3c3c3c;">-30.3</div>
<div class="t" style="top:440.50px;font-size:8.8px;line-height:8.8px;color:#3c3c3c;left:711.35px;width:300px;text-align:center;transform:scaleX(0.8);transform-origin:50% 50%;-webkit-text-stroke:0.12px #3c3c3c;">72.0</div>
<div class="t" style="top:440.50px;font-size:8.8px;line-height:8.8px;color:#3c3c3c;left:760.45px;width:300px;text-align:center;transform:scaleX(0.8);transform-origin:50% 50%;-webkit-text-stroke:0.12px #3c3c3c;">163.3</div>
<div class="t" style="top:440.50px;font-size:8.8px;line-height:8.8px;color:#3c3c3c;left:809.55px;width:300px;text-align:center;transform:scaleX(0.8);transform-origin:50% 50%;-webkit-text-stroke:0.12px #3c3c3c;">159.4</div>
<div class="t" style="top:440.50px;font-size:8.8px;line-height:8.8px;color:#3c3c3c;left:858.65px;width:300px;text-align:center;transform:scaleX(0.8);transform-origin:50% 50%;-webkit-text-stroke:0.12px #3c3c3c;">204.6</div>
</body></html>
